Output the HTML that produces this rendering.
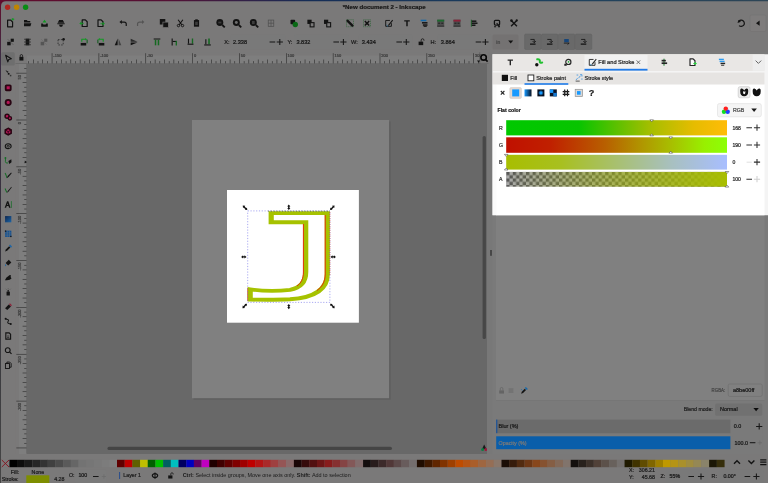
<!DOCTYPE html>
<html><head><meta charset="utf-8"><title>Inkscape</title>
<style>html,body{margin:0;padding:0;background:#777;overflow:hidden}svg{display:block;filter:blur(0.4px)}</style>
</head><body>
<svg width="768" height="483" viewBox="0 0 768 483" font-family='"Liberation Sans", sans-serif'>
<g>
<defs>
<linearGradient id="desk_d" x1="0" x2="1" y1="0" y2="0"><stop offset="0" stop-color="#620c2c"/><stop offset="0.22" stop-color="#541034"/><stop offset="0.4" stop-color="#152d56"/><stop offset="0.7" stop-color="#1d415e"/><stop offset="1" stop-color="#2d4556"/></linearGradient>
<linearGradient id="gR_d" x1="0" x2="1"><stop offset="0" stop-color="#009600"/><stop offset="0.33" stop-color="#069300"/><stop offset="0.5" stop-color="#459000"/><stop offset="0.66" stop-color="#7e8e00"/><stop offset="0.85" stop-color="#ac8d00"/><stop offset="1" stop-color="#bd8b04"/></linearGradient>
<linearGradient id="gG_d" x1="0" x2="1"><stop offset="0" stop-color="#900c00"/><stop offset="0.2" stop-color="#901800"/><stop offset="0.45" stop-color="#8a4800"/><stop offset="0.62" stop-color="#847200"/><stop offset="0.745" stop-color="#7e8e00"/><stop offset="0.9" stop-color="#72b400"/><stop offset="1" stop-color="#67bd04"/></linearGradient>
<linearGradient id="gB_d" x1="0" x2="1"><stop offset="0" stop-color="#7e8e00"/><stop offset="0.25" stop-color="#768810"/><stop offset="0.5" stop-color="#627438"/><stop offset="0.75" stop-color="#546666"/><stop offset="1" stop-color="#546495"/></linearGradient>
<linearGradient id="gA_d" x1="0" x2="1"><stop offset="0" stop-color="#7e8e00" stop-opacity="0"/><stop offset="1" stop-color="#7e8e00" stop-opacity="1"/></linearGradient>
<pattern id="chk_d" x="506.2" y="171.9" width="6.6" height="6.6" patternUnits="userSpaceOnUse"><rect width="6.6" height="6.6" fill="#545454"/><rect width="3.3" height="3.3" fill="#2c2c2c"/><rect x="3.3" y="3.3" width="3.3" height="3.3" fill="#2c2c2c"/></pattern>
</defs>
<rect x="0.00" y="0.00" width="768.00" height="483.00" fill="url(#desk_d)" />
<defs><linearGradient id="dl_d" x1="0" x2="0" y1="0" y2="1"><stop offset="0" stop-color="#620c2c"/><stop offset="0.12" stop-color="#3c2d44"/><stop offset="0.6" stop-color="#35353c"/><stop offset="1" stop-color="#454545"/></linearGradient></defs>
<rect x="0.00" y="0.00" width="2.00" height="483.00" fill="url(#dl_d)" />
<path d="M1 483 V6 Q1 1.2 6 1.2 H769 V483 Z" fill="#7a7979"/>
<circle cx="7.6" cy="7.3" r="2.7" fill="#af2820"/>
<circle cx="16.6" cy="7.3" r="2.7" fill="#bf8400"/>
<circle cx="25.6" cy="7.3" r="2.7" fill="#088c14"/>
<text x="342.70" y="9.30" font-size="6.2" fill="#1a1a1a" stroke="#1a1a1a" stroke-width="0.22" font-weight="bold" text-anchor="start"  textLength="83" lengthAdjust="spacingAndGlyphs">*New document 2 - Inkscape</text>
<rect x="26.80" y="63.70" width="460.20" height="390.70" fill="#686868" />
<rect x="193.50" y="121.50" width="197.10" height="278.20" fill="#5e5e5e" />
<rect x="192.00" y="120.00" width="197.10" height="278.20" fill="#808080" />
<g transform="scale(1.33 1)"><path d="M203.91 213.1 H246.09 V274 C246.09 287 239.10 297.5 218.05 299.3 C206.77 300 196.99 299.8 188.12 299.6 V289.4 C196.99 291 207.52 291.6 218.05 289.8 C225.56 288 229.85 283 229.85 272 V222.2 H203.91 Z" fill="none" stroke="#7c9200" stroke-width="3.9" stroke-linejoin="miter"/></g>
<path d="M303.4 224 V272 C303.4 279 301 283 297 286" fill="none" stroke="#ac1605" stroke-width="0.9"/>
<path d="M325.2 215 V274 C325.2 282 322 287 317 290.5" fill="none" stroke="#ac1605" stroke-width="0.9"/>
<path d="M329.9 212 V276" fill="none" stroke="#a42008" stroke-width="0.6" stroke-dasharray="1 1"/>
<path d="M247.6 288 V301" fill="none" stroke="#a42008" stroke-width="0.6"/>
<path d="M268 211.1 H329.9" fill="none" stroke="#283408" stroke-width="0.7" stroke-dasharray="1.2 1.6"/>
<rect x="247.7" y="210.9" width="82.2" height="91.5" fill="none" stroke="#383892" stroke-width="0.6" stroke-dasharray="1.2 1.6"/>
<g transform="translate(245 207.8) rotate(45)"><path d="M-3.2 0 L-1.2000000000000002 -1.6 V-0.7 H1.2000000000000002 V-1.6 L3.2 0 L1.2000000000000002 1.6 V0.7 H-1.2000000000000002 V1.6 Z" fill="#080808"/></g>
<g transform="translate(288.8 207.2) rotate(90)"><path d="M-2.7 0 L-0.7000000000000002 -1.6 V-0.7 H0.7000000000000002 V-1.6 L2.7 0 L0.7000000000000002 1.6 V0.7 H-0.7000000000000002 V1.6 Z" fill="#080808"/></g>
<g transform="translate(332.3 207.8) rotate(-45)"><path d="M-3.2 0 L-1.2000000000000002 -1.6 V-0.7 H1.2000000000000002 V-1.6 L3.2 0 L1.2000000000000002 1.6 V0.7 H-1.2000000000000002 V1.6 Z" fill="#080808"/></g>
<g transform="translate(243.8 256.9) rotate(0)"><path d="M-2.7 0 L-0.7000000000000002 -1.6 V-0.7 H0.7000000000000002 V-1.6 L2.7 0 L0.7000000000000002 1.6 V0.7 H-0.7000000000000002 V1.6 Z" fill="#080808"/></g>
<g transform="translate(333.2 256.9) rotate(0)"><path d="M-2.7 0 L-0.7000000000000002 -1.6 V-0.7 H0.7000000000000002 V-1.6 L2.7 0 L0.7000000000000002 1.6 V0.7 H-0.7000000000000002 V1.6 Z" fill="#080808"/></g>
<g transform="translate(244.7 305.9) rotate(-45)"><path d="M-3.2 0 L-1.2000000000000002 -1.6 V-0.7 H1.2000000000000002 V-1.6 L3.2 0 L1.2000000000000002 1.6 V0.7 H-1.2000000000000002 V1.6 Z" fill="#080808"/></g>
<g transform="translate(288.8 306.6) rotate(90)"><path d="M-2.7 0 L-0.7000000000000002 -1.6 V-0.7 H0.7000000000000002 V-1.6 L2.7 0 L0.7000000000000002 1.6 V0.7 H-0.7000000000000002 V1.6 Z" fill="#080808"/></g>
<g transform="translate(332.4 305.9) rotate(45)"><path d="M-3.2 0 L-1.2000000000000002 -1.6 V-0.7 H1.2000000000000002 V-1.6 L3.2 0 L1.2000000000000002 1.6 V0.7 H-1.2000000000000002 V1.6 Z" fill="#080808"/></g>
<rect x="107.50" y="446.80" width="284.50" height="3.20" fill="#454545" rx="1.6"/>
<rect x="482.60" y="136.00" width="3.30" height="203.00" fill="#474747" rx="1.6"/>
<path d="M482 449 L484.2 444.6 L486.4 449 Z" fill="#1a1a1a"/><circle cx="482.6" cy="449.6" r="1.5" fill="#0c7e42"/><circle cx="485.8" cy="449.6" r="1.5" fill="#9c183c"/>
<rect x="487.00" y="52.00" width="6.00" height="402.40" fill="#787878" />
<rect x="490.40" y="250.00" width="1.20" height="5.80" fill="#282828" />
<rect x="15.50" y="52.30" width="473.00" height="11.40" fill="#7a7979" />
<rect x="27.00" y="55.50" width="452.60" height="8.20" fill="#7e7e7e" />
<rect x="15.50" y="63.70" width="11.30" height="390.70" fill="#7a7979" />
<rect x="19.00" y="64.00" width="7.80" height="390.40" fill="#7e7e7e" />
<rect x="28.32" y="61.10" width="0.60" height="2.60" fill="#2a2a2a" />
<rect x="33.01" y="59.50" width="0.60" height="4.20" fill="#2a2a2a" />
<rect x="37.69" y="61.10" width="0.60" height="2.60" fill="#2a2a2a" />
<rect x="42.38" y="59.50" width="0.60" height="4.20" fill="#2a2a2a" />
<rect x="47.06" y="61.10" width="0.60" height="2.60" fill="#2a2a2a" />
<rect x="51.75" y="53.20" width="0.60" height="10.50" fill="#2a2a2a" />
<text x="53.35" y="57.30" font-size="4" fill="#3c3c3c" stroke="#3c3c3c" stroke-width="0.22" font-weight="normal" text-anchor="start" >-150</text>
<rect x="56.43" y="61.10" width="0.60" height="2.60" fill="#2a2a2a" />
<rect x="61.12" y="59.50" width="0.60" height="4.20" fill="#2a2a2a" />
<rect x="65.80" y="61.10" width="0.60" height="2.60" fill="#2a2a2a" />
<rect x="70.49" y="59.50" width="0.60" height="4.20" fill="#2a2a2a" />
<rect x="75.17" y="61.10" width="0.60" height="2.60" fill="#2a2a2a" />
<rect x="79.86" y="59.50" width="0.60" height="4.20" fill="#2a2a2a" />
<rect x="84.54" y="61.10" width="0.60" height="2.60" fill="#2a2a2a" />
<rect x="89.23" y="59.50" width="0.60" height="4.20" fill="#2a2a2a" />
<rect x="93.91" y="61.10" width="0.60" height="2.60" fill="#2a2a2a" />
<rect x="98.60" y="53.20" width="0.60" height="10.50" fill="#2a2a2a" />
<text x="100.20" y="57.30" font-size="4" fill="#3c3c3c" stroke="#3c3c3c" stroke-width="0.22" font-weight="normal" text-anchor="start" >-100</text>
<rect x="103.28" y="61.10" width="0.60" height="2.60" fill="#2a2a2a" />
<rect x="107.97" y="59.50" width="0.60" height="4.20" fill="#2a2a2a" />
<rect x="112.65" y="61.10" width="0.60" height="2.60" fill="#2a2a2a" />
<rect x="117.34" y="59.50" width="0.60" height="4.20" fill="#2a2a2a" />
<rect x="122.02" y="61.10" width="0.60" height="2.60" fill="#2a2a2a" />
<rect x="126.71" y="59.50" width="0.60" height="4.20" fill="#2a2a2a" />
<rect x="131.39" y="61.10" width="0.60" height="2.60" fill="#2a2a2a" />
<rect x="136.08" y="59.50" width="0.60" height="4.20" fill="#2a2a2a" />
<rect x="140.76" y="61.10" width="0.60" height="2.60" fill="#2a2a2a" />
<rect x="145.45" y="53.20" width="0.60" height="10.50" fill="#2a2a2a" />
<text x="147.05" y="57.30" font-size="4" fill="#3c3c3c" stroke="#3c3c3c" stroke-width="0.22" font-weight="normal" text-anchor="start" >-50</text>
<rect x="150.13" y="61.10" width="0.60" height="2.60" fill="#2a2a2a" />
<rect x="154.82" y="59.50" width="0.60" height="4.20" fill="#2a2a2a" />
<rect x="159.50" y="61.10" width="0.60" height="2.60" fill="#2a2a2a" />
<rect x="164.19" y="59.50" width="0.60" height="4.20" fill="#2a2a2a" />
<rect x="168.87" y="61.10" width="0.60" height="2.60" fill="#2a2a2a" />
<rect x="173.56" y="59.50" width="0.60" height="4.20" fill="#2a2a2a" />
<rect x="178.24" y="61.10" width="0.60" height="2.60" fill="#2a2a2a" />
<rect x="182.93" y="59.50" width="0.60" height="4.20" fill="#2a2a2a" />
<rect x="187.61" y="61.10" width="0.60" height="2.60" fill="#2a2a2a" />
<rect x="192.30" y="53.20" width="0.60" height="10.50" fill="#2a2a2a" />
<text x="193.90" y="57.30" font-size="4" fill="#3c3c3c" stroke="#3c3c3c" stroke-width="0.22" font-weight="normal" text-anchor="start" >0</text>
<rect x="196.98" y="61.10" width="0.60" height="2.60" fill="#2a2a2a" />
<rect x="201.67" y="59.50" width="0.60" height="4.20" fill="#2a2a2a" />
<rect x="206.35" y="61.10" width="0.60" height="2.60" fill="#2a2a2a" />
<rect x="211.04" y="59.50" width="0.60" height="4.20" fill="#2a2a2a" />
<rect x="215.72" y="61.10" width="0.60" height="2.60" fill="#2a2a2a" />
<rect x="220.41" y="59.50" width="0.60" height="4.20" fill="#2a2a2a" />
<rect x="225.09" y="61.10" width="0.60" height="2.60" fill="#2a2a2a" />
<rect x="229.78" y="59.50" width="0.60" height="4.20" fill="#2a2a2a" />
<rect x="234.46" y="61.10" width="0.60" height="2.60" fill="#2a2a2a" />
<rect x="239.15" y="53.20" width="0.60" height="10.50" fill="#2a2a2a" />
<text x="240.75" y="57.30" font-size="4" fill="#3c3c3c" stroke="#3c3c3c" stroke-width="0.22" font-weight="normal" text-anchor="start" >50</text>
<rect x="243.83" y="61.10" width="0.60" height="2.60" fill="#2a2a2a" />
<rect x="248.52" y="59.50" width="0.60" height="4.20" fill="#2a2a2a" />
<rect x="253.20" y="61.10" width="0.60" height="2.60" fill="#2a2a2a" />
<rect x="257.89" y="59.50" width="0.60" height="4.20" fill="#2a2a2a" />
<rect x="262.57" y="61.10" width="0.60" height="2.60" fill="#2a2a2a" />
<rect x="267.26" y="59.50" width="0.60" height="4.20" fill="#2a2a2a" />
<rect x="271.94" y="61.10" width="0.60" height="2.60" fill="#2a2a2a" />
<rect x="276.63" y="59.50" width="0.60" height="4.20" fill="#2a2a2a" />
<rect x="281.31" y="61.10" width="0.60" height="2.60" fill="#2a2a2a" />
<rect x="286.00" y="53.20" width="0.60" height="10.50" fill="#2a2a2a" />
<text x="287.60" y="57.30" font-size="4" fill="#3c3c3c" stroke="#3c3c3c" stroke-width="0.22" font-weight="normal" text-anchor="start" >100</text>
<rect x="290.69" y="61.10" width="0.60" height="2.60" fill="#2a2a2a" />
<rect x="295.37" y="59.50" width="0.60" height="4.20" fill="#2a2a2a" />
<rect x="300.06" y="61.10" width="0.60" height="2.60" fill="#2a2a2a" />
<rect x="304.74" y="59.50" width="0.60" height="4.20" fill="#2a2a2a" />
<rect x="309.43" y="61.10" width="0.60" height="2.60" fill="#2a2a2a" />
<rect x="314.11" y="59.50" width="0.60" height="4.20" fill="#2a2a2a" />
<rect x="318.80" y="61.10" width="0.60" height="2.60" fill="#2a2a2a" />
<rect x="323.48" y="59.50" width="0.60" height="4.20" fill="#2a2a2a" />
<rect x="328.17" y="61.10" width="0.60" height="2.60" fill="#2a2a2a" />
<rect x="332.85" y="53.20" width="0.60" height="10.50" fill="#2a2a2a" />
<text x="334.45" y="57.30" font-size="4" fill="#3c3c3c" stroke="#3c3c3c" stroke-width="0.22" font-weight="normal" text-anchor="start" >150</text>
<rect x="337.54" y="61.10" width="0.60" height="2.60" fill="#2a2a2a" />
<rect x="342.22" y="59.50" width="0.60" height="4.20" fill="#2a2a2a" />
<rect x="346.91" y="61.10" width="0.60" height="2.60" fill="#2a2a2a" />
<rect x="351.59" y="59.50" width="0.60" height="4.20" fill="#2a2a2a" />
<rect x="356.28" y="61.10" width="0.60" height="2.60" fill="#2a2a2a" />
<rect x="360.96" y="59.50" width="0.60" height="4.20" fill="#2a2a2a" />
<rect x="365.65" y="61.10" width="0.60" height="2.60" fill="#2a2a2a" />
<rect x="370.33" y="59.50" width="0.60" height="4.20" fill="#2a2a2a" />
<rect x="375.02" y="61.10" width="0.60" height="2.60" fill="#2a2a2a" />
<rect x="379.70" y="53.20" width="0.60" height="10.50" fill="#2a2a2a" />
<text x="381.30" y="57.30" font-size="4" fill="#3c3c3c" stroke="#3c3c3c" stroke-width="0.22" font-weight="normal" text-anchor="start" >200</text>
<rect x="384.38" y="61.10" width="0.60" height="2.60" fill="#2a2a2a" />
<rect x="389.07" y="59.50" width="0.60" height="4.20" fill="#2a2a2a" />
<rect x="393.75" y="61.10" width="0.60" height="2.60" fill="#2a2a2a" />
<rect x="398.44" y="59.50" width="0.60" height="4.20" fill="#2a2a2a" />
<rect x="403.12" y="61.10" width="0.60" height="2.60" fill="#2a2a2a" />
<rect x="407.81" y="59.50" width="0.60" height="4.20" fill="#2a2a2a" />
<rect x="412.50" y="61.10" width="0.60" height="2.60" fill="#2a2a2a" />
<rect x="417.18" y="59.50" width="0.60" height="4.20" fill="#2a2a2a" />
<rect x="421.87" y="61.10" width="0.60" height="2.60" fill="#2a2a2a" />
<rect x="426.55" y="53.20" width="0.60" height="10.50" fill="#2a2a2a" />
<text x="428.15" y="57.30" font-size="4" fill="#3c3c3c" stroke="#3c3c3c" stroke-width="0.22" font-weight="normal" text-anchor="start" >250</text>
<rect x="431.24" y="61.10" width="0.60" height="2.60" fill="#2a2a2a" />
<rect x="435.92" y="59.50" width="0.60" height="4.20" fill="#2a2a2a" />
<rect x="440.61" y="61.10" width="0.60" height="2.60" fill="#2a2a2a" />
<rect x="445.29" y="59.50" width="0.60" height="4.20" fill="#2a2a2a" />
<rect x="449.97" y="61.10" width="0.60" height="2.60" fill="#2a2a2a" />
<rect x="454.66" y="59.50" width="0.60" height="4.20" fill="#2a2a2a" />
<rect x="459.34" y="61.10" width="0.60" height="2.60" fill="#2a2a2a" />
<rect x="464.03" y="59.50" width="0.60" height="4.20" fill="#2a2a2a" />
<rect x="468.71" y="61.10" width="0.60" height="2.60" fill="#2a2a2a" />
<rect x="473.40" y="53.20" width="0.60" height="10.50" fill="#2a2a2a" />
<text x="475.00" y="57.30" font-size="4" fill="#3c3c3c" stroke="#3c3c3c" stroke-width="0.22" font-weight="normal" text-anchor="start" >300</text>
<rect x="478.08" y="61.10" width="0.60" height="2.60" fill="#2a2a2a" />
<rect x="16.30" y="447.65" width="10.50" height="0.60" fill="#2a2a2a" />
<rect x="24.20" y="442.97" width="2.60" height="0.60" fill="#2a2a2a" />
<rect x="22.60" y="438.28" width="4.20" height="0.60" fill="#2a2a2a" />
<rect x="24.20" y="433.60" width="2.60" height="0.60" fill="#2a2a2a" />
<rect x="22.60" y="428.91" width="4.20" height="0.60" fill="#2a2a2a" />
<rect x="24.20" y="424.23" width="2.60" height="0.60" fill="#2a2a2a" />
<rect x="22.60" y="419.54" width="4.20" height="0.60" fill="#2a2a2a" />
<rect x="24.20" y="414.86" width="2.60" height="0.60" fill="#2a2a2a" />
<rect x="22.60" y="410.17" width="4.20" height="0.60" fill="#2a2a2a" />
<rect x="24.20" y="405.49" width="2.60" height="0.60" fill="#2a2a2a" />
<rect x="16.30" y="400.80" width="10.50" height="0.60" fill="#2a2a2a" />
<text x="0.00" y="0.00" font-size="4" fill="#3c3c3c" stroke="#3c3c3c" stroke-width="0.22" font-weight="normal" text-anchor="end" transform="translate(20.6 403.1) rotate(-90)">-300</text>
<rect x="24.20" y="396.12" width="2.60" height="0.60" fill="#2a2a2a" />
<rect x="22.60" y="391.43" width="4.20" height="0.60" fill="#2a2a2a" />
<rect x="24.20" y="386.75" width="2.60" height="0.60" fill="#2a2a2a" />
<rect x="22.60" y="382.06" width="4.20" height="0.60" fill="#2a2a2a" />
<rect x="24.20" y="377.38" width="2.60" height="0.60" fill="#2a2a2a" />
<rect x="22.60" y="372.69" width="4.20" height="0.60" fill="#2a2a2a" />
<rect x="24.20" y="368.00" width="2.60" height="0.60" fill="#2a2a2a" />
<rect x="22.60" y="363.32" width="4.20" height="0.60" fill="#2a2a2a" />
<rect x="24.20" y="358.63" width="2.60" height="0.60" fill="#2a2a2a" />
<rect x="16.30" y="353.95" width="10.50" height="0.60" fill="#2a2a2a" />
<text x="0.00" y="0.00" font-size="4" fill="#3c3c3c" stroke="#3c3c3c" stroke-width="0.22" font-weight="normal" text-anchor="end" transform="translate(20.6 356.2) rotate(-90)">-250</text>
<rect x="24.20" y="349.26" width="2.60" height="0.60" fill="#2a2a2a" />
<rect x="22.60" y="344.58" width="4.20" height="0.60" fill="#2a2a2a" />
<rect x="24.20" y="339.89" width="2.60" height="0.60" fill="#2a2a2a" />
<rect x="22.60" y="335.21" width="4.20" height="0.60" fill="#2a2a2a" />
<rect x="24.20" y="330.53" width="2.60" height="0.60" fill="#2a2a2a" />
<rect x="22.60" y="325.84" width="4.20" height="0.60" fill="#2a2a2a" />
<rect x="24.20" y="321.16" width="2.60" height="0.60" fill="#2a2a2a" />
<rect x="22.60" y="316.47" width="4.20" height="0.60" fill="#2a2a2a" />
<rect x="24.20" y="311.79" width="2.60" height="0.60" fill="#2a2a2a" />
<rect x="16.30" y="307.10" width="10.50" height="0.60" fill="#2a2a2a" />
<text x="0.00" y="0.00" font-size="4" fill="#3c3c3c" stroke="#3c3c3c" stroke-width="0.22" font-weight="normal" text-anchor="end" transform="translate(20.6 309.4) rotate(-90)">-200</text>
<rect x="24.20" y="302.42" width="2.60" height="0.60" fill="#2a2a2a" />
<rect x="22.60" y="297.73" width="4.20" height="0.60" fill="#2a2a2a" />
<rect x="24.20" y="293.05" width="2.60" height="0.60" fill="#2a2a2a" />
<rect x="22.60" y="288.36" width="4.20" height="0.60" fill="#2a2a2a" />
<rect x="24.20" y="283.68" width="2.60" height="0.60" fill="#2a2a2a" />
<rect x="22.60" y="278.99" width="4.20" height="0.60" fill="#2a2a2a" />
<rect x="24.20" y="274.31" width="2.60" height="0.60" fill="#2a2a2a" />
<rect x="22.60" y="269.62" width="4.20" height="0.60" fill="#2a2a2a" />
<rect x="24.20" y="264.94" width="2.60" height="0.60" fill="#2a2a2a" />
<rect x="16.30" y="260.25" width="10.50" height="0.60" fill="#2a2a2a" />
<text x="0.00" y="0.00" font-size="4" fill="#3c3c3c" stroke="#3c3c3c" stroke-width="0.22" font-weight="normal" text-anchor="end" transform="translate(20.6 262.6) rotate(-90)">-150</text>
<rect x="24.20" y="255.56" width="2.60" height="0.60" fill="#2a2a2a" />
<rect x="22.60" y="250.88" width="4.20" height="0.60" fill="#2a2a2a" />
<rect x="24.20" y="246.19" width="2.60" height="0.60" fill="#2a2a2a" />
<rect x="22.60" y="241.51" width="4.20" height="0.60" fill="#2a2a2a" />
<rect x="24.20" y="236.82" width="2.60" height="0.60" fill="#2a2a2a" />
<rect x="22.60" y="232.14" width="4.20" height="0.60" fill="#2a2a2a" />
<rect x="24.20" y="227.45" width="2.60" height="0.60" fill="#2a2a2a" />
<rect x="22.60" y="222.77" width="4.20" height="0.60" fill="#2a2a2a" />
<rect x="24.20" y="218.08" width="2.60" height="0.60" fill="#2a2a2a" />
<rect x="16.30" y="213.40" width="10.50" height="0.60" fill="#2a2a2a" />
<text x="0.00" y="0.00" font-size="4" fill="#3c3c3c" stroke="#3c3c3c" stroke-width="0.22" font-weight="normal" text-anchor="end" transform="translate(20.6 215.7) rotate(-90)">-100</text>
<rect x="24.20" y="208.72" width="2.60" height="0.60" fill="#2a2a2a" />
<rect x="22.60" y="204.03" width="4.20" height="0.60" fill="#2a2a2a" />
<rect x="24.20" y="199.34" width="2.60" height="0.60" fill="#2a2a2a" />
<rect x="22.60" y="194.66" width="4.20" height="0.60" fill="#2a2a2a" />
<rect x="24.20" y="189.97" width="2.60" height="0.60" fill="#2a2a2a" />
<rect x="22.60" y="185.29" width="4.20" height="0.60" fill="#2a2a2a" />
<rect x="24.20" y="180.60" width="2.60" height="0.60" fill="#2a2a2a" />
<rect x="22.60" y="175.92" width="4.20" height="0.60" fill="#2a2a2a" />
<rect x="24.20" y="171.23" width="2.60" height="0.60" fill="#2a2a2a" />
<rect x="16.30" y="166.55" width="10.50" height="0.60" fill="#2a2a2a" />
<text x="0.00" y="0.00" font-size="4" fill="#3c3c3c" stroke="#3c3c3c" stroke-width="0.22" font-weight="normal" text-anchor="end" transform="translate(20.6 168.8) rotate(-90)">-50</text>
<rect x="24.20" y="161.86" width="2.60" height="0.60" fill="#2a2a2a" />
<rect x="22.60" y="157.18" width="4.20" height="0.60" fill="#2a2a2a" />
<rect x="24.20" y="152.49" width="2.60" height="0.60" fill="#2a2a2a" />
<rect x="22.60" y="147.81" width="4.20" height="0.60" fill="#2a2a2a" />
<rect x="24.20" y="143.12" width="2.60" height="0.60" fill="#2a2a2a" />
<rect x="22.60" y="138.44" width="4.20" height="0.60" fill="#2a2a2a" />
<rect x="24.20" y="133.75" width="2.60" height="0.60" fill="#2a2a2a" />
<rect x="22.60" y="129.07" width="4.20" height="0.60" fill="#2a2a2a" />
<rect x="24.20" y="124.39" width="2.60" height="0.60" fill="#2a2a2a" />
<rect x="16.30" y="119.70" width="10.50" height="0.60" fill="#2a2a2a" />
<text x="0.00" y="0.00" font-size="4" fill="#3c3c3c" stroke="#3c3c3c" stroke-width="0.22" font-weight="normal" text-anchor="end" transform="translate(20.6 122.0) rotate(-90)">0</text>
<rect x="24.20" y="115.02" width="2.60" height="0.60" fill="#2a2a2a" />
<rect x="22.60" y="110.33" width="4.20" height="0.60" fill="#2a2a2a" />
<rect x="24.20" y="105.64" width="2.60" height="0.60" fill="#2a2a2a" />
<rect x="22.60" y="100.96" width="4.20" height="0.60" fill="#2a2a2a" />
<rect x="24.20" y="96.27" width="2.60" height="0.60" fill="#2a2a2a" />
<rect x="22.60" y="91.59" width="4.20" height="0.60" fill="#2a2a2a" />
<rect x="24.20" y="86.90" width="2.60" height="0.60" fill="#2a2a2a" />
<rect x="22.60" y="82.22" width="4.20" height="0.60" fill="#2a2a2a" />
<rect x="24.20" y="77.53" width="2.60" height="0.60" fill="#2a2a2a" />
<rect x="16.30" y="72.85" width="10.50" height="0.60" fill="#2a2a2a" />
<text x="0.00" y="0.00" font-size="4" fill="#3c3c3c" stroke="#3c3c3c" stroke-width="0.22" font-weight="normal" text-anchor="end" transform="translate(20.6 75.1) rotate(-90)">50</text>
<rect x="24.20" y="68.16" width="2.60" height="0.60" fill="#2a2a2a" />
<rect x="15.50" y="63.40" width="473.00" height="0.50" fill="#5e5e5e" />
<rect x="26.50" y="63.70" width="0.50" height="390.00" fill="#5e5e5e" />
<rect x="479.60" y="52.30" width="0.50" height="11.40" fill="#4c4c4c" />
<circle cx="483.6" cy="57.4" r="2.7" fill="none" stroke="#080808" stroke-width="1.6"/><path d="M485.6 59.5 L487.6 61.6" stroke="#080808" stroke-width="1.7"/>
<g transform="translate(10.00 23.50) scale(0.92)" opacity="1"><path d="M-2.6 -3.6 H0.8 L2.8 -1.6 V3.6 H-2.6 Z" fill="#7e7e7e" stroke="#131313" stroke-width="1.3" stroke-linejoin="round"/><path d="M1.6 -4.6 H4.6 M3.1 -6 V-3.2" stroke="#119a23" stroke-width="1.1"/></g>
<g transform="translate(27.50 23.20) scale(0.92)" opacity="1"><path d="M-3.8 -3.4 H-0.8 L0.2 -2.3 H3 V-0.8 H-3.8 Z M-3.8 0 H4.2 L3.2 3.4 H-3.8 Z" fill="#131313"/></g>
<g transform="translate(44.50 23.50) scale(0.92)" opacity="1"><path d="M-3.6 0 H-2 L-1.2 1.2 H1.2 L2 0 H3.6 V3.6 H-3.6 Z" fill="#131313"/><path d="M0 -4.2 L2.2 -1 H-2.2 Z" fill="#119a23"/></g>
<g transform="translate(61.00 23.20) scale(0.92)" opacity="1"><path d="M-2 -3.6 H2 L3.6 -0.6 H-3.6 Z M-4 0 H4 V1.2 H-4 Z M-2.2 1.8 H2.2 L1.2 3.8 H-1.2 Z" fill="#131313"/></g>
<g transform="translate(84.60 23.20) scale(0.92)" opacity="1"><path d="M-2.6 -3.6 H0.8 L2.8 -1.6 V3.6 H-2.6 Z" fill="#7e7e7e" stroke="#131313" stroke-width="1.3" stroke-linejoin="round"/><path d="M-1 0.2 H-5 M-3.2 -1.6 L-5 0.2 L-3.2 2" stroke="#119a23" stroke-width="1" fill="none"/></g>
<g transform="translate(100.40 23.20) scale(0.92)" opacity="1"><path d="M-2.6 -3.6 H0.8 L2.8 -1.6 V3.6 H-2.6 Z" fill="#7e7e7e" stroke="#131313" stroke-width="1.3" stroke-linejoin="round"/><path d="M0 0.6 H4 M2.4 -1.2 L4.2 0.6 L2.4 2.4" stroke="#119a23" stroke-width="1" fill="none"/></g>
<g transform="translate(123.30 23.20) scale(0.92)" opacity="1"><g transform="scale(1 1)"><path d="M-2.6 -1.2 H1 Q3.2 -1.2 3.2 1 V3" fill="none" stroke="#131313" stroke-width="1.3"/><path d="M-4.2 -1.2 L-1.6 -3.4 V1 Z" fill="#131313"/></g></g>
<g transform="translate(140.50 23.20) scale(0.92)" opacity="0.8"><g transform="scale(-1 1)"><path d="M-2.6 -1.2 H1 Q3.2 -1.2 3.2 1 V3" fill="none" stroke="#4c4c4c" stroke-width="1.3"/><path d="M-4.2 -1.2 L-1.6 -3.4 V1 Z" fill="#4c4c4c"/></g></g>
<g transform="translate(164.00 23.20) scale(1.1)" opacity="1"><rect x="-3.8" y="-3.8" width="5" height="5" fill="#131313"/><rect x="-1" y="-1" width="5" height="5" fill="#131313" stroke="#7a7979" stroke-width="0.6"/></g>
<g transform="translate(180.50 23.20) scale(0.92)" opacity="1"><path d="M-2.6 -3.8 L1.6 2 M2.6 -3.8 L-1.6 2" stroke="#131313" stroke-width="1.2"/><circle cx="-2.2" cy="2.6" r="1.3" fill="none" stroke="#131313" stroke-width="1"/><circle cx="2.2" cy="2.6" r="1.3" fill="none" stroke="#131313" stroke-width="1"/></g>
<g transform="translate(196.50 23.20) scale(0.92)" opacity="1"><rect x="-2.8" y="-3.4" width="5.6" height="7.2" fill="#131313"/><rect x="-1.4" y="-4.2" width="2.8" height="1.6" fill="#131313"/><rect x="-1.4" y="-1.6" width="2.8" height="3.6" fill="#3c3c3c"/></g>
<g transform="translate(220.50 23.20) scale(1.12)" opacity="1"><circle cx="-0.6" cy="-0.6" r="3.1" fill="#131313"/><path d="M1.6 1.6 L3.8 3.8" stroke="#131313" stroke-width="1.6"/><rect x="-2" y="-1.4" width="2.8" height="1.6" fill="#3c3c3c"/></g>
<g transform="translate(237.00 23.20) scale(1.12)" opacity="1"><circle cx="-0.6" cy="-0.6" r="3.1" fill="#131313"/><path d="M1.6 1.6 L3.8 3.8" stroke="#131313" stroke-width="1.6"/><circle cx="-0.6" cy="-0.6" r="1.3" fill="#6e6e6e"/></g>
<g transform="translate(254.00 23.20) scale(1.12)" opacity="1"><circle cx="-0.6" cy="-0.6" r="3.1" fill="#131313"/><path d="M1.6 1.6 L3.8 3.8" stroke="#131313" stroke-width="1.6"/><rect x="-1.8" y="-2" width="2.4" height="2.8" fill="#3c3c3c"/></g>
<g transform="translate(271.00 23.20) scale(0.92)" opacity="0.8"><rect x="-3" y="-3.4" width="6" height="6.8" fill="none" stroke="#444444" stroke-width="0.8"/><path d="M0 -3.4 V3.4 M-3 0 H3" stroke="#444444" stroke-width="0.8"/></g>
<g transform="translate(294.00 23.20) scale(0.92)" opacity="1"><rect x="-3.8" y="-3.8" width="5" height="5" rx="0.8" fill="#131313"/><circle cx="1.4" cy="1.4" r="2.9" fill="#086814"/></g>
<g transform="translate(310.70 23.20) scale(0.92)" opacity="1"><rect x="-3.6" y="-3.8" width="4.6" height="4.6" fill="#131313"/><rect x="-0.6" y="-0.6" width="4.2" height="4.6" fill="#7a7979" stroke="#131313" stroke-width="1.2"/></g>
<g transform="translate(327.30 23.20) scale(0.92)" opacity="1"><rect x="-3.6" y="-3.8" width="4.6" height="4.6" fill="#131313"/><rect x="-0.6" y="-0.6" width="4.2" height="4.6" fill="#7a7979" stroke="#131313" stroke-width="1.2"/></g>
<g transform="translate(350.00 23.20) scale(0.92)" opacity="1"><rect x="-3.8" y="-3.8" width="7.6" height="7.6" fill="none" stroke="#155d21" stroke-width="0.7" stroke-dasharray="1 1.2"/><path d="M-2.6 -2.6 L2.6 2.6" stroke="#131313" stroke-width="2.6" stroke-linecap="round"/></g>
<g transform="translate(367.00 23.20) scale(0.92)" opacity="1"><rect x="-3.8" y="-3.8" width="7.6" height="7.6" fill="none" stroke="#155d21" stroke-width="0.7" stroke-dasharray="1 1.2"/><path d="M-2.4 -2.4 L2.4 2.4 M2.4 -2.4 L-2.4 2.4" stroke="#131313" stroke-width="1.5"/><rect x="-1.3" y="-1.3" width="2.6" height="2.6" fill="#131313"/></g>
<g transform="translate(389.00 23.20) scale(0.92)" opacity="1"><path d="M-3.6 -3 H1 M-3.6 -3 V3.4 H2.6 V0" fill="none" stroke="#131313" stroke-width="1"/><path d="M3.6 -3.8 L-0.6 1.4 L-1.4 3 L0.4 2.2 L4.4 -3 Z" fill="#131313"/><path d="M-2.6 2 L-1 3.6" stroke="#1d6a9a" stroke-width="0.9"/></g>
<g transform="translate(407.00 23.20) scale(0.92)" opacity="1"><path d="M-2.992 -3.168 H2.992 V-1.76 H0.792 V3.344 H-0.792 V-1.76 H-2.992 Z" fill="#131313"/></g>
<g transform="translate(424.00 23.20) scale(0.92)" opacity="1"><rect x="-3.6" y="-3.8" width="6.2" height="1.7" fill="#1569aa"/><rect x="-2.2" y="-1.2" width="6" height="1.6" fill="#131313"/><rect x="-1.2" y="1.2" width="5" height="1.6" fill="#131313"/><rect x="-0.4" y="3.2" width="3.4" height="0.9" fill="#131313"/></g>
<g transform="translate(440.70 23.20) scale(0.92)" opacity="1"><rect x="-3.8" y="-3.8" width="7.6" height="7.6" fill="#4d4d4d"/><rect x="-3.8" y="-3.8" width="7.6" height="2" fill="#1d6a2e"/><rect x="-2.8" y="-0.6" width="2.2" height="1.4" fill="#2a2a2a"/><rect x="0.6" y="-0.6" width="2.2" height="1.4" fill="#2a2a2a"/><rect x="-3.8" y="2.6" width="7.6" height="1.2" fill="#333333"/></g>
<g transform="translate(457.00 23.20) scale(0.92)" opacity="1"><rect x="-3.8" y="-3.8" width="7.6" height="7.6" fill="#4d4d4d"/><rect x="-3.8" y="-3.8" width="7.6" height="2" fill="#8c2038"/><rect x="-2.8" y="-0.6" width="2.2" height="1.4" fill="#2a2a2a"/><rect x="0.6" y="-0.6" width="2.2" height="1.4" fill="#2a2a2a"/><rect x="-3.8" y="2.6" width="7.6" height="1.2" fill="#333333"/></g>
<g transform="translate(474.00 23.20) scale(0.92)" opacity="1"><rect x="-3.4" y="-3.8" width="1" height="7.6" fill="#155d21"/><rect x="-2.4" y="-3" width="5" height="1.6" fill="#131313"/><rect x="-2.4" y="-0.8" width="6.2" height="1.6" fill="#131313"/><rect x="-2.4" y="1.4" width="4" height="1.6" fill="#131313"/></g>
<g transform="translate(497.00 23.20) scale(0.92)" opacity="1"><rect x="-2.8" y="-3" width="5.6" height="5" rx="1" fill="none" stroke="#131313" stroke-width="1.4"/><path d="M-3.2 3.8 H-1 M1 3.8 H3.2 M-0.4 0 L2.8 3.4" stroke="#131313" stroke-width="1.2"/></g>
<g transform="translate(514.00 23.20) scale(0.92)" opacity="1"><path d="M-3.2 3.2 L3 -3 M-3 -3 L3.2 3.2" stroke="#131313" stroke-width="1.5"/><circle cx="-2.8" cy="-2.8" r="1.4" fill="#131313"/><circle cx="3" cy="-3" r="1.2" fill="#131313"/></g>
<g transform="translate(741.30 23.20) scale(0.92)" opacity="1"><path d="M-2.6 -2.2 A3.4 3.4 0 1 1 -2.4 2.6" fill="none" stroke="#131313" stroke-width="1.3"/><path d="M-4.6 -0.8 H-0.6 L-2.6 -3.6 Z" fill="#131313" transform="rotate(-20 -2.6 -2)"/></g>
<rect x="750.00" y="15.00" width="16.00" height="16.50" fill="#7e7c7c" rx="1.5" stroke="#727171" stroke-width="0.5"/>
<path d="M759.6 20.6 L756 23.2 L759.6 25.8 Z" fill="#131313"/>
<g transform="translate(10.50 42.00) scale(0.92)" opacity="1"><rect x="-3.6" y="-0.2" width="3.8" height="3.8" fill="#131313"/><rect x="0.2" y="-3.6" width="3.4" height="3.4" fill="#131313"/><path d="M-3 -3 L3 3" stroke="#4c4c4c" stroke-width="0.7"/></g>
<g transform="translate(27.50 42.00) scale(0.92)" opacity="1"><rect x="-2" y="-3.6" width="4" height="7.2" fill="#131313"/><path d="M-3.8 -3 H3.8 M-3.8 0 H3.8 M-3.8 3 H3.8" stroke="#2a2a2a" stroke-width="0.8"/></g>
<g transform="translate(44.00 42.00) scale(0.92)" opacity="0.35"><rect x="-3.6" y="-0.2" width="3.8" height="3.8" fill="#131313"/><rect x="0.2" y="-3.6" width="3.4" height="3.4" fill="#131313"/><path d="M-3 -3 L3 3" stroke="#4c4c4c" stroke-width="0.7"/></g>
<g transform="translate(61.00 42.00) scale(0.92)" opacity="1"><rect x="-3.2" y="-2.6" width="5.6" height="5.8" fill="none" stroke="#2a2a2a" stroke-width="0.9" stroke-dasharray="1.6 1.4"/><circle cx="2.8" cy="-3" r="1.4" fill="#131313"/></g>
<g transform="translate(84.00 42.00) scale(0.92)" opacity="1"><g transform="scale(1 1)"><rect x="-3.6" y="1" width="6" height="2.8" fill="#131313"/><path d="M-2.4 -0.4 V-3 H1.6" fill="none" stroke="#119a23" stroke-width="1.2"/><path d="M1.2 -4.4 L3.4 -3 L1.2 -1.6 Z" fill="#119a23"/><rect x="2.8" y="-2.6" width="1.2" height="4" fill="#155d21"/></g></g>
<g transform="translate(101.00 42.00) scale(0.92)" opacity="1"><g transform="scale(-1 1)"><rect x="-3.6" y="1" width="6" height="2.8" fill="#131313"/><path d="M-2.4 -0.4 V-3 H1.6" fill="none" stroke="#119a23" stroke-width="1.2"/><path d="M1.2 -4.4 L3.4 -3 L1.2 -1.6 Z" fill="#119a23"/><rect x="2.8" y="-2.6" width="1.2" height="4" fill="#155d21"/></g></g>
<g transform="translate(118.00 42.00) scale(0.92)" opacity="1"><path d="M-0.4 -3.8 L-3.6 3.6 H-0.4 Z" fill="#131313"/><path d="M0.6 -3.8 L3.6 3.6 H0.6 Z" fill="#444444"/></g>
<g transform="translate(134.00 42.00) scale(0.92)" opacity="1"><path d="M-3.6 -3.6 L3.8 -0.3 H-3.6 Z" fill="#2a2a2a"/><path d="M-3.6 3.6 L3.8 0.5 H-3.6 Z" fill="#131313"/></g>
<g transform="translate(157.00 42.00) scale(0.92)" opacity="1"><rect x="-3.6" y="-3.8" width="7.2" height="1.1" fill="#131313"/><rect x="-2.4" y="-2.4" width="1.6" height="6" fill="#156921"/><rect x="0.8" y="-2.4" width="1.6" height="6" fill="#156921"/></g>
<g transform="translate(174.00 42.00) scale(0.92)" opacity="1"><rect x="-2.6" y="-3.8" width="1.2" height="7.6" fill="#131313"/><rect x="-1.4" y="-1.2" width="4" height="1.2" fill="#131313"/><rect x="1.8" y="-1.2" width="1.4" height="5" fill="#156921"/></g>
<g transform="translate(190.50 42.00) scale(0.92)" opacity="1"><rect x="-2.8" y="-3.6" width="1.2" height="5.4" fill="#131313"/><rect x="1.4" y="-3.8" width="1.5" height="5.6" fill="#156921"/><rect x="-3.2" y="1.8" width="6.4" height="1.2" fill="#131313"/></g>
<g transform="translate(207.50 42.00) scale(0.92)" opacity="1"><rect x="-2.4" y="-3" width="1.2" height="5.4" fill="#131313"/><rect x="0.8" y="-3.8" width="1.7" height="6.2" fill="#156921"/><rect x="-3.6" y="2.6" width="7.2" height="1.2" fill="#131313"/></g>
<text x="224.20" y="43.90" font-size="5.6" fill="#1d1d1d" stroke="#1d1d1d" stroke-width="0.22" font-weight="normal" text-anchor="start" >X:</text>
<rect x="230.50" y="34.50" width="55.00" height="15.00" fill="#797979" rx="1.5"/>
<text x="233.00" y="44.02" font-size="5.6" fill="#151515" stroke="#151515" stroke-width="0.22" font-weight="normal" text-anchor="start" >2.338</text>
<path d="M269.59999999999997 42.0 H275.2" stroke="#171717" stroke-width="1.05"/>
<path d="M276.7 42.0 H282.90000000000003 M279.8 38.9 V45.1" stroke="#171717" stroke-width="1.05"/>
<text x="287.40" y="43.90" font-size="5.6" fill="#1d1d1d" stroke="#1d1d1d" stroke-width="0.22" font-weight="normal" text-anchor="start" >Y:</text>
<rect x="294.00" y="34.50" width="55.00" height="15.00" fill="#797979" rx="1.5"/>
<text x="296.40" y="44.02" font-size="5.6" fill="#151515" stroke="#151515" stroke-width="0.22" font-weight="normal" text-anchor="start" >3.832</text>
<path d="M333.4 42.0 H339.0" stroke="#171717" stroke-width="1.05"/>
<path d="M340.29999999999995 42.0 H346.5 M343.4 38.9 V45.1" stroke="#171717" stroke-width="1.05"/>
<text x="351.00" y="43.90" font-size="5.6" fill="#1d1d1d" stroke="#1d1d1d" stroke-width="0.22" font-weight="normal" text-anchor="start" >W:</text>
<rect x="358.50" y="34.50" width="54.00" height="15.00" fill="#797979" rx="1.5"/>
<text x="361.80" y="44.02" font-size="5.6" fill="#151515" stroke="#151515" stroke-width="0.22" font-weight="normal" text-anchor="start" >3.434</text>
<path d="M396.4 42.0 H402.0" stroke="#171717" stroke-width="1.05"/>
<path d="M403.2 42.0 H409.40000000000003 M406.3 38.9 V45.1" stroke="#171717" stroke-width="1.05"/>
<g transform="translate(421.00 42.00) scale(0.92)" opacity="1"><rect x="-2.6" y="-0.4" width="5" height="3.8" fill="#131313"/><path d="M0.2 -0.4 V-2 A1.5 1.5 0 0 1 3.2 -2 V-1.4" fill="none" stroke="#131313" stroke-width="0.9"/></g>
<text x="430.40" y="43.90" font-size="5.6" fill="#1d1d1d" stroke="#1d1d1d" stroke-width="0.22" font-weight="normal" text-anchor="start" >H:</text>
<rect x="437.50" y="34.50" width="54.00" height="15.00" fill="#797979" rx="1.5"/>
<text x="440.80" y="44.02" font-size="5.6" fill="#151515" stroke="#151515" stroke-width="0.22" font-weight="normal" text-anchor="start" >3.864</text>
<path d="M475.7 42.0 H481.3" stroke="#171717" stroke-width="1.05"/>
<path d="M482.29999999999995 42.0 H488.5 M485.4 38.9 V45.1" stroke="#171717" stroke-width="1.05"/>
<rect x="492.50" y="34.50" width="26.00" height="15.00" fill="#747272" rx="1.5"/>
<text x="496.30" y="43.60" font-size="5" fill="#454545" stroke="#454545" stroke-width="0.22" font-weight="normal" text-anchor="start" >in</text>
<path d="M508.2 40.6 H513.2 L510.7 43.6 Z" fill="#131313"/>
<rect x="524.60" y="34.00" width="16.50" height="15.50" fill="#696969" rx="1.2" stroke="#626262" stroke-width="0.5"/>
<g transform="translate(532.80 42.00) scale(0.92)" opacity="1"><path d="M-2.6 -2.8 H1.6 V0.6 M-0.2 -1 L1.6 0.8 L3.4 -1" fill="none" stroke="#131313" stroke-width="0.9"/><rect x="-3" y="1.6" width="6" height="1.4" fill="#131313"/></g>
<rect x="541.50" y="34.00" width="16.50" height="15.50" fill="#696969" rx="1.2" stroke="#626262" stroke-width="0.5"/>
<g transform="translate(549.70 42.00) scale(0.92)" opacity="1"><path d="M-2.6 -2.8 H1.6 V0.6 M-0.2 -1 L1.6 0.8 L3.4 -1" fill="none" stroke="#131313" stroke-width="0.9"/><rect x="-3" y="1.6" width="6" height="1.4" fill="#131313"/></g>
<rect x="558.40" y="34.00" width="16.50" height="15.50" fill="#696969" rx="1.2" stroke="#626262" stroke-width="0.5"/>
<g transform="translate(566.60 42.00) scale(0.92)" opacity="1"><rect x="-2.6" y="-3.2" width="5" height="3.4" fill="#15457a"/><path d="M-3 1.2 H3 M1 2.8 L2.6 1.4" stroke="#131313" stroke-width="0.9"/></g>
<rect x="575.30" y="34.00" width="16.50" height="15.50" fill="#696969" rx="1.2" stroke="#626262" stroke-width="0.5"/>
<g transform="translate(583.50 42.00) scale(0.92)" opacity="1"><path d="M-2.6 -2.8 H1.6 V0.6 M-0.2 -1 L1.6 0.8 L3.4 -1" fill="none" stroke="#131313" stroke-width="0.9"/><rect x="-3" y="1.6" width="6" height="1.4" fill="#131313"/></g>
<rect x="1.20" y="52.20" width="13.60" height="13.20" fill="#6e6e6e" rx="1.5"/>
<g transform="translate(8.20 58.60) scale(0.92)" opacity="1"><path d="M-2.8 -3.6 L3.4 0.2 L0.6 0.9 L-0.4 3.6 Z" fill="#7a7979" stroke="#131313" stroke-width="1.2" stroke-linejoin="round"/></g>
<g transform="translate(21.40 57.60) scale(0.92)" opacity="1"><rect x="-2.2" y="-0.8" width="4.4" height="4" fill="#131313"/><path d="M-1.3 -0.8 V-2 A1.3 1.3 0 0 1 1.3 -2 V-0.8" fill="none" stroke="#131313" stroke-width="0.9"/></g>
<g transform="translate(8.20 73.20) scale(0.92)" opacity="1"><path d="M-3 -3.4 L0.6 -1.4 L-1 -0.6 Z" fill="#131313"/><rect x="-0.4" y="-0.2" width="1.8" height="1.8" fill="#131313"/><rect x="1.8" y="1.8" width="1.6" height="1.6" fill="#333333"/></g>
<g transform="translate(8.20 87.80) scale(0.92)" opacity="1"><rect x="-2.7" y="-2.7" width="5.4" height="5.4" rx="0.8" fill="#b51556" stroke="#290512" stroke-width="2"/></g>
<g transform="translate(8.20 102.40) scale(0.92)" opacity="1"><circle r="2.8" fill="#b51556" stroke="#290512" stroke-width="2"/></g>
<g transform="translate(8.20 117.00) scale(0.92)" opacity="1"><circle cx="-1.2" cy="-0.8" r="2.2" fill="#b51556" stroke="#290512" stroke-width="1.6"/><circle cx="1.8" cy="1.4" r="1.8" fill="#b51556" stroke="#290512" stroke-width="1.5"/></g>
<g transform="translate(8.20 131.60) scale(0.92)" opacity="1"><path d="M0 -3.6 L3.2 -1.8 V1.8 L0 3.6 L-3.2 1.8 V-1.8 Z" fill="#b51556" stroke="#290512" stroke-width="1.7"/><path d="M-3.2 -1.8 L0 0 L3.2 -1.8 M0 0 V3.6" stroke="#290512" stroke-width="1" fill="none"/></g>
<g transform="translate(8.20 146.20) scale(0.92)" opacity="1"><ellipse rx="3.2" ry="2.6" fill="none" stroke="#131313" stroke-width="1.2"/><ellipse rx="1.3" ry="1" fill="none" stroke="#131313" stroke-width="0.9"/></g>
<g transform="translate(8.20 160.80) scale(0.92)" opacity="1"><path d="M-3 -3.4 V1 Q-3 3 0 2.4" fill="none" stroke="#156e26" stroke-width="1"/><circle cx="-3" cy="-3" r="1" fill="#156e26"/><path d="M0.2 0.2 L3.4 -1.6 L3.6 1.6 L1.2 3.4 Z" fill="#131313"/></g>
<g transform="translate(8.20 175.40) scale(0.92)" opacity="1"><path d="M-3.4 -2.6 Q-2 0 -1.4 2.8" fill="none" stroke="#156e26" stroke-width="1.1"/><path d="M-1.6 3.2 L-0.6 0.6 L3.2 -3.2 L3.8 -2.4 L0.4 1.8 Z" fill="#131313"/></g>
<g transform="translate(8.20 190.00) scale(0.92)" opacity="1"><path d="M-3.4 -1.6 Q-2.4 0.6 -1.6 2.6" fill="none" stroke="#156e26" stroke-width="1.1"/><path d="M-1.8 3.2 L-0.4 1 L3.4 -3.4 L3.8 -2.8 L0.2 2 Z" fill="#131313"/></g>
<g transform="translate(7.60 204.60) scale(0.92)" opacity="1"><path d="M-3.2 3.4 L-0.6 -3.6 H0.8 L3.2 3.4 H1.6 L1 1.6 H-1 L-1.6 3.4 Z M-0.5 0.4 H0.6 L0 -1.6 Z" fill="#131313"/><rect x="3.6" y="-3.8" width="0.8" height="7.4" fill="#156e26"/></g>
<defs><linearGradient id="tg_d" x1="0" y1="0" x2="1" y2="1"><stop offset="0" stop-color="#0d254e"/><stop offset="1" stop-color="#1d65a6"/></linearGradient></defs>
<g transform="translate(8.20 219.20) scale(0.92)" opacity="1"><rect x="-3.4" y="-3.4" width="6.8" height="6.8" fill="url(#tg_d)"/></g>
<g transform="translate(8.20 233.80) scale(0.92)" opacity="1"><rect x="-3.4" y="-3.4" width="6.8" height="6.8" fill="#155192"/><path d="M-1 -3.4 V3.4 M1.4 -3.4 V3.4 M-3.4 -1 H3.4 M-3.4 1.4 H3.4" stroke="#5e7385" stroke-width="0.6"/><rect x="-3.6" y="-3.6" width="1.4" height="1.4" fill="#131313"/><rect x="2.2" y="2.2" width="1.4" height="1.4" fill="#131313"/></g>
<g transform="translate(8.20 248.40) scale(0.92)" opacity="1"><path d="M-3.4 3.4 L-2.6 1.2 L1 -2.4 L2.4 -1 L-1.2 2.6 Z" fill="#131313"/><path d="M1.4 -3.6 L3.6 -1.4" stroke="#1d65a6" stroke-width="1.6"/></g>
<g transform="translate(8.20 263.00) scale(0.92)" opacity="1"><path d="M-2.8 0 L0.6 -3.4 L3.4 -0.6 L0 2.8 Z" fill="#131313"/><path d="M-3.4 1.6 Q-3.8 3.4 -2.6 3.4 Q-1.8 3.2 -2.6 1.4 Z" fill="#1d65a6"/></g>
<g transform="translate(8.20 277.60) scale(0.92)" opacity="1"><path d="M-3.6 2.8 Q-2 -1 0 -1.4 Q2 -3.6 3 -2.4 Q2 -1 3.6 1 Q2 3.4 -3.6 2.8 Z" fill="#131313"/></g>
<g transform="translate(8.20 292.20) scale(0.92)" opacity="1"><rect x="-1.8" y="-0.6" width="3.6" height="4.2" fill="#131313"/><rect x="-0.8" y="-2.2" width="1.6" height="1.6" fill="#131313"/><path d="M-2.6 -3.6 L-2 -3 M0 -4 V-3.2 M2.6 -3.6 L2 -3" stroke="#333333" stroke-width="0.7"/></g>
<g transform="translate(8.20 306.80) scale(0.92)" opacity="1"><path d="M-3.4 1.6 L0.6 -2.6 L3 -0.4 L-1 3.6 Z" fill="#131313"/><path d="M1.4 -3.4 L3.6 -1.2" stroke="#8c2038" stroke-width="1.4"/></g>
<g transform="translate(8.20 321.40) scale(0.92)" opacity="1"><path d="M-2.6 -2.6 Q1.6 -2 -0.2 0.2 Q-1.6 2 2.8 2.8" fill="none" stroke="#131313" stroke-width="1.1"/><circle cx="-2.8" cy="-2.8" r="1.1" fill="#131313"/><circle cx="2.8" cy="2.8" r="1.1" fill="#131313"/></g>
<g transform="translate(8.20 336.00) scale(0.92)" opacity="1"><path d="M-2.6 -3.4 H1 L2.6 -1.8 V3.4 H-2.6 Z" fill="none" stroke="#131313" stroke-width="1.2"/><path d="M-1.2 0 H1.2 M-1.2 1.6 H1.2" stroke="#131313" stroke-width="0.7"/></g>
<g transform="translate(8.20 350.60) scale(0.92)" opacity="1"><circle cx="-0.5" cy="-0.5" r="2.6" fill="none" stroke="#131313" stroke-width="1.2"/><path d="M1.4 1.4 L3.6 3.6" stroke="#131313" stroke-width="1.4"/></g>
<g transform="translate(8.20 365.20) scale(0.92)" opacity="1"><rect x="-3" y="-1.8" width="4.4" height="5.4" fill="#7a7979" stroke="#131313" stroke-width="1"/><path d="M-1.4 -1.8 V-3.4 H1.6 L3.2 -1.8 V2.2 H1.4" fill="none" stroke="#131313" stroke-width="1"/></g>
<path d="M24.8 160.4 L26.8 162 L24.8 163.6 Z" fill="#131313"/>
<path d="M477.6 61.6 L479.2 63.6 L480.8 61.6 Z" fill="#131313" transform="translate(-0.6 -1)"/>
<rect x="492.50" y="52.00" width="275.50" height="402.40" fill="#7a7a7a" />
<rect x="496.00" y="84.40" width="268.50" height="316.00" fill="#808080" />
<rect x="492.50" y="84.40" width="4.00" height="131.00" fill="#7e7e7e" />
<rect x="496.00" y="400.20" width="268.50" height="0.50" fill="#707070" />
<rect x="492.50" y="54.00" width="271.90" height="17.20" fill="#767472" />
<rect x="752.60" y="54.60" width="11.80" height="16.00" fill="#777777" />
<rect x="584.50" y="55.00" width="63.00" height="14.00" fill="#787878" />
<rect x="584.50" y="68.80" width="63.00" height="1.80" fill="#1054a6" />
<rect x="492.50" y="71.20" width="271.90" height="1.40" fill="#7a7a7a" />
<rect x="492.50" y="72.60" width="271.90" height="11.80" fill="#747271" />
<rect x="524.50" y="83.20" width="43.80" height="1.60" fill="#1054a6" />
<g transform="translate(510.30 62.30) scale(0.92)" opacity="1"><path d="M-2.8899999999999997 -3.06 H2.8899999999999997 V-1.7 H0.765 V3.23 H-0.765 V-1.7 H-2.8899999999999997 Z" fill="#131313"/></g>
<g transform="translate(538.80 62.30) scale(1)" opacity="1"><path d="M-1.6 -3 Q1.6 -3.4 1 -0.8 Q0.6 1 3.4 0.2" fill="none" stroke="#11881c" stroke-width="2" stroke-linecap="round"/><circle cx="-2" cy="2.4" r="1.7" fill="#080808"/></g>
<g transform="translate(567.80 62.30) scale(0.92)" opacity="1"><circle cx="0.6" cy="-0.4" r="2.8" fill="none" stroke="#131313" stroke-width="1.3"/><circle cx="0.8" cy="-0.4" r="0.9" fill="#0c781e"/><rect x="-3.8" y="1.6" width="2.6" height="2.2" fill="#131313"/></g>
<g transform="translate(592.60 62.20) scale(0.92)" opacity="1"><path d="M-3.6 -3 H1 M-3.6 -3 V3.4 H2.6 V0" fill="none" stroke="#131313" stroke-width="1"/><path d="M3.6 -3.8 L-0.6 1.4 L-1.4 3 L0.4 2.2 L4.4 -3 Z" fill="#131313"/><path d="M-2.6 2 L-1 3.6" stroke="#1d6a9a" stroke-width="0.9"/></g>
<text x="598.30" y="64.20" font-size="5.7" fill="#131313" stroke="#131313" stroke-width="0.22" font-weight="normal" text-anchor="start"  textLength="36.2" lengthAdjust="spacingAndGlyphs">Fill and Stroke</text>
<path d="M636.6 60.4 L640.2 64 M640.2 60.4 L636.6 64" stroke="#202020" stroke-width="0.7"/>
<g transform="translate(664.00 62.20) scale(0.92)" opacity="1"><rect x="-0.6" y="-3.8" width="1.2" height="7.6" fill="#155d21"/><rect x="-2.6" y="-2.6" width="4.6" height="1.8" fill="#131313"/><rect x="-2.6" y="0.2" width="6" height="1.8" fill="#131313"/></g>
<g transform="translate(692.40 62.20) scale(0.92)" opacity="1"><path d="M-2.6 -3.6 H0.8 L2.8 -1.6 V3.6 H-2.6 Z" fill="#7e7e7e" stroke="#131313" stroke-width="1.3" stroke-linejoin="round"/><path d="M1 1.4 H4 M2.6 -0.2 L4.2 1.4 L2.6 3" stroke="#119a23" stroke-width="1" fill="none"/></g>
<g transform="translate(722.00 62.20) scale(0.92)" opacity="1"><rect x="-3.4" y="-3.8" width="5.4" height="1.5" fill="#1569aa"/><rect x="-2.6" y="-1.6" width="5.4" height="1.5" fill="#1569aa"/><rect x="-1.6" y="0.6" width="5" height="1.5" fill="#131313"/><rect x="-1" y="2.8" width="3.4" height="1" fill="#131313"/></g>
<path d="M755.6 60.6 L758.4 63.4 L761.2 60.6" fill="none" stroke="#2a2a2a" stroke-width="0.9"/>
<rect x="501.80" y="74.80" width="6.20" height="6.20" fill="#080808" />
<text x="510.20" y="79.80" font-size="5.5" fill="#131313" stroke="#131313" stroke-width="0.22" font-weight="normal" text-anchor="start" >Fill</text>
<rect x="528" y="75" width="5.8" height="5.8" fill="#808080" stroke="#111111" stroke-width="0.9"/>
<text x="536.30" y="79.80" font-size="5.5" fill="#131313" stroke="#131313" stroke-width="0.22" font-weight="normal" text-anchor="start"  textLength="29.7" lengthAdjust="spacingAndGlyphs">Stroke paint</text>
<g transform="translate(578.80 77.80) scale(0.92)" opacity="1"><path d="M-3.2 2.2 L2.4 -2.2" stroke="#155d9e" stroke-width="1" stroke-dasharray="1.4 0.8"/><path d="M-2.4 -3 H-0.6 M1.4 -3.4 H3.4 V-1.4 M3.4 0.6 V2.2" stroke="#155d9e" stroke-width="0.8" fill="none"/><path d="M-3.4 3.6 H1" stroke="#131313" stroke-width="0.8"/></g>
<text x="584.60" y="79.80" font-size="5.5" fill="#131313" stroke="#131313" stroke-width="0.22" font-weight="normal" text-anchor="start"  textLength="28.3" lengthAdjust="spacingAndGlyphs">Stroke style</text>
<path d="M500.8 91 L504.4 94.6 M504.4 91 L500.8 94.6" stroke="#131313" stroke-width="1.1"/>
<rect x="509.80" y="87.60" width="11.60" height="10.80" fill="#766e69" rx="1.2" stroke="#6b6460" stroke-width="0.5"/>
<rect x="512.20" y="89.40" width="7.00" height="7.00" fill="#0c6eb9" />
<defs><linearGradient id="lg1_d"><stop offset="0" stop-color="#0c6eb9"/><stop offset="1" stop-color="#030a16"/></linearGradient><radialGradient id="rg1_d"><stop offset="0.25" stop-color="#0c6eb9"/><stop offset="0.8" stop-color="#030a16"/></radialGradient></defs>
<rect x="524.50" y="89.40" width="7.00" height="7.00" fill="url(#lg1_d)" />
<rect x="537.40" y="89.40" width="7.00" height="7.00" fill="url(#rg1_d)" />
<rect x="549.80" y="89.40" width="7.00" height="7.00" fill="#050c1c" />
<rect x="549.80" y="89.40" width="3.50" height="3.50" fill="#0c6eb9" />
<rect x="553.30" y="92.90" width="3.50" height="3.50" fill="#0b5496" />
<g transform="translate(566.00 92.90) scale(0.92)" opacity="1"><path d="M-3.6 -1.4 H3.6 M-3.6 1.6 H3.6 M-1.4 -3.6 V3.6 M1.6 -3.6 V3.6" stroke="#080808" stroke-width="1.2"/><rect x="-2.4" y="-2.4" width="1.8" height="1.8" fill="#131313"/><rect x="0.8" y="0.8" width="1.8" height="1.8" fill="#131313"/><rect x="-2.4" y="0.8" width="1.8" height="1.8" fill="#131313"/><rect x="0.8" y="-2.4" width="1.8" height="1.8" fill="#131313"/></g>
<rect x="575.2" y="89.3" width="7.2" height="7.2" fill="#6c6c6c" stroke="#484848" stroke-width="0.7"/>
<rect x="577.00" y="91.10" width="3.60" height="3.60" fill="#0c6eb9" />
<text x="591.40" y="96.20" font-size="9" fill="#0d0d0d" stroke="#0d0d0d" stroke-width="0.22" font-weight="bold" text-anchor="middle" >?</text>
<rect x="738.20" y="86.70" width="11.80" height="11.10" fill="#767676" rx="1.8" stroke="#626262" stroke-width="0.6"/>
<g transform="translate(744.20 92.40) scale(1)" opacity="1"><path d="M-4 -2.2 Q-4 -4.2 -2.3 -3.9 Q-0.7 -3.5 0 -1.8 Q0.7 -3.5 2.3 -3.9 Q4 -4.2 4 -2.2 V-0.6 C4 2.2 2.6 3.9 0 3.9 C-2.6 3.9 -4 2.2 -4 -0.6 Z" fill="#080808"/><path d="M-1.1 -1.5 Q0 0 1.1 -1.5 V0.4 Q1.1 1.8 0 1.8 Q-1.1 1.8 -1.1 0.4 Z" fill="#7c7c7c"/></g>
<g transform="translate(756.70 92.40) scale(1)" opacity="1"><path d="M-4 -2.2 Q-4 -4.2 -2.3 -3.9 Q-0.7 -3.5 0 -1.8 Q0.7 -3.5 2.3 -3.9 Q4 -4.2 4 -2.2 V-0.6 C4 2.2 2.6 3.9 0 3.9 C-2.6 3.9 -4 2.2 -4 -0.6 Z" fill="#080808"/></g>
<text x="497.50" y="112.00" font-size="5.4" fill="#0d0d0d" stroke="#0d0d0d" stroke-width="0.22" font-weight="bold" text-anchor="start"  textLength="23.3" lengthAdjust="spacingAndGlyphs">Flat color</text>
<rect x="717.50" y="103.60" width="43.80" height="13.20" fill="#7a7a7a" rx="1.8" stroke="#6f6f6f" stroke-width="0.6"/>
<circle cx="724" cy="111.8" r="2.2" fill="#08a414"/><circle cx="727.7" cy="111.8" r="2.2" fill="#1028b7"/><circle cx="725.8" cy="108.6" r="2.2" fill="#b71010"/>
<text x="732.90" y="112.00" font-size="5.2" fill="#252525" stroke="#252525" stroke-width="0.22" font-weight="normal" text-anchor="start"  textLength="11.4" lengthAdjust="spacingAndGlyphs">RGB</text>
<path d="M751.3 108.6 H756.9 L754.1 112 Z" fill="#0d0d0d"/>
<text x="499.00" y="129.70" font-size="5.2" fill="#1a1a1a" stroke="#1a1a1a" stroke-width="0.22" font-weight="normal" text-anchor="start" >R</text>
<rect x="506.20" y="120.20" width="220.80" height="15.20" fill="url(#gR_d)" />
<path d="M649.8682352941177 119.8 H653.4682352941176 L651.6682352941176 121.8 Z M649.8682352941177 135.8 H653.4682352941176 L651.6682352941176 133.8 Z" fill="#808080" stroke="#1a1a1a" stroke-width="0.5"/>
<rect x="728.80" y="119.80" width="32.60" height="15.80" fill="#808080" rx="1.5"/>
<text x="732.40" y="129.70" font-size="5.1" fill="#151515" stroke="#151515" stroke-width="0.22" font-weight="normal" text-anchor="start" >168</text>
<path d="M746.4000000000001 127.7 H752.0" stroke="#171717" stroke-width="1.05"/>
<path d="M753.9 127.7 H760.1 M757 124.60000000000001 V130.8" stroke="#171717" stroke-width="1.05"/>
<text x="499.00" y="146.95" font-size="5.2" fill="#1a1a1a" stroke="#1a1a1a" stroke-width="0.22" font-weight="normal" text-anchor="start" >G</text>
<rect x="506.20" y="137.30" width="220.80" height="15.50" fill="url(#gG_d)" />
<path d="M668.9176470588236 136.9 H672.5176470588235 L670.7176470588236 138.9 Z M668.9176470588236 153.20000000000002 H672.5176470588235 L670.7176470588236 151.20000000000002 Z" fill="#808080" stroke="#1a1a1a" stroke-width="0.5"/>
<rect x="728.80" y="136.90" width="32.60" height="16.10" fill="#808080" rx="1.5"/>
<text x="732.40" y="146.95" font-size="5.1" fill="#151515" stroke="#151515" stroke-width="0.22" font-weight="normal" text-anchor="start" >190</text>
<path d="M746.4000000000001 144.95000000000002 H752.0" stroke="#171717" stroke-width="1.05"/>
<path d="M753.9 144.95000000000002 H760.1 M757 141.85000000000002 V148.05" stroke="#171717" stroke-width="1.05"/>
<text x="499.00" y="164.10" font-size="5.2" fill="#1a1a1a" stroke="#1a1a1a" stroke-width="0.22" font-weight="normal" text-anchor="start" >B</text>
<rect x="506.20" y="154.80" width="220.80" height="14.80" fill="url(#gB_d)" />
<path d="M504.4 154.4 H508.0 L506.2 156.4 Z M504.4 170.0 H508.0 L506.2 168.0 Z" fill="#808080" stroke="#1a1a1a" stroke-width="0.5"/>
<rect x="728.80" y="154.40" width="32.60" height="15.40" fill="#808080" rx="1.5"/>
<text x="732.40" y="164.10" font-size="5.1" fill="#151515" stroke="#151515" stroke-width="0.22" font-weight="normal" text-anchor="start" >0</text>
<path d="M753.9 162.1 H760.1 M757 159.0 V165.2" stroke="#171717" stroke-width="1.05"/>
<path d="M746.6 162.2 H751.8" stroke="#6c6c6c" stroke-width="0.8"/>
<text x="499.00" y="181.20" font-size="5.2" fill="#1a1a1a" stroke="#1a1a1a" stroke-width="0.22" font-weight="normal" text-anchor="start" >A</text>
<rect x="506.20" y="171.90" width="220.80" height="14.80" fill="url(#chk_d)" />
<rect x="506.20" y="171.90" width="220.80" height="14.80" fill="url(#gA_d)" />
<path d="M725.2 171.5 H728.8 L727.0 173.5 Z M725.2 187.1 H728.8 L727.0 185.1 Z" fill="#808080" stroke="#1a1a1a" stroke-width="0.5"/>
<rect x="728.80" y="171.50" width="32.60" height="15.40" fill="#808080" rx="1.5"/>
<text x="732.40" y="181.20" font-size="5.1" fill="#151515" stroke="#151515" stroke-width="0.22" font-weight="normal" text-anchor="start" >100</text>
<path d="M746.4000000000001 179.2 H752.0" stroke="#171717" stroke-width="1.05"/>
<path d="M753.9 179.2 H760.1 M757 176.1 V182.29999999999998" stroke="#686868" stroke-width="1.05"/>
<g transform="translate(501.60 390.60) scale(0.92)" opacity="1"><rect x="-2.6" y="-0.2" width="5.2" height="3.4" fill="#646464"/><path d="M-1.4 -0.2 V-2 A1.4 1.4 0 0 1 1.4 -2 V-0.2" fill="none" stroke="#646464" stroke-width="0.8"/></g>
<g transform="translate(511.00 390.60) scale(0.92)" opacity="1"><rect x="-2.6" y="-2.6" width="5.2" height="5.2" fill="#737373"/></g>
<g transform="translate(524.20 390.60) scale(0.92)" opacity="1"><path d="M-3.4 3.4 L-2.6 1.2 L0.6 -2 L2 -0.6 L-1.2 2.6 Z" fill="#131313"/><path d="M1.2 -3.4 L3.4 -1.2" stroke="#1569aa" stroke-width="1.8"/><path d="M-3.2 -1.4 L-2 -0.2" stroke="#1569aa" stroke-width="0.9"/></g>
<text x="711.60" y="391.80" font-size="4.8" fill="#454545" stroke="#454545" stroke-width="0.22" font-weight="normal" text-anchor="start"  textLength="13.6" lengthAdjust="spacingAndGlyphs">RGBA:</text>
<rect x="728.20" y="384.00" width="34.00" height="12.40" fill="#808080" rx="1.5" stroke="#6d6d6d" stroke-width="0.6"/>
<text x="732.90" y="391.90" font-size="5.4" fill="#181818" stroke="#181818" stroke-width="0.22" font-weight="normal" text-anchor="start"  textLength="21.5" lengthAdjust="spacingAndGlyphs">a8be00ff</text>
<text x="683.70" y="411.20" font-size="5.3" fill="#202020" stroke="#202020" stroke-width="0.22" font-weight="normal" text-anchor="start"  textLength="29.1" lengthAdjust="spacingAndGlyphs">Blend mode:</text>
<rect x="715.20" y="403.40" width="47.00" height="12.40" fill="#717171" rx="1.5"/>
<text x="720.00" y="411.20" font-size="5.4" fill="#181818" stroke="#181818" stroke-width="0.22" font-weight="normal" text-anchor="start"  textLength="17.6" lengthAdjust="spacingAndGlyphs">Normal</text>
<path d="M753.4 408 H758.8 L756.1 411.2 Z" fill="#0d0d0d"/>
<rect x="496.20" y="419.60" width="234.20" height="13.60" fill="#6b6b6b" />
<rect x="496.20" y="419.60" width="1.10" height="13.60" fill="#15519e" />
<text x="498.50" y="428.20" font-size="5.4" fill="#181818" stroke="#181818" stroke-width="0.22" font-weight="normal" text-anchor="start"  textLength="19.9" lengthAdjust="spacingAndGlyphs">Blur (%)</text>
<rect x="731.00" y="419.40" width="31.60" height="14.00" fill="#7a7a7a" rx="1.5"/>
<text x="733.80" y="428.34" font-size="5.4" fill="#151515" stroke="#151515" stroke-width="0.22" font-weight="normal" text-anchor="start" >0.0</text>
<path d="M756.1 426.4 H762.3000000000001 M759.2 423.29999999999995 V429.5" stroke="#171717" stroke-width="1.05"/>
<rect x="496.20" y="436.30" width="234.20" height="12.90" fill="#0a5eaa" />
<text x="498.50" y="444.50" font-size="5.4" fill="#7a7a7a" stroke="#7a7a7a" stroke-width="0.22" font-weight="normal" text-anchor="start"  textLength="28.1" lengthAdjust="spacingAndGlyphs">Opacity (%)</text>
<rect x="731.00" y="436.00" width="31.60" height="13.40" fill="#7a7a7a" rx="1.5"/>
<text x="734.50" y="444.64" font-size="5.4" fill="#151515" stroke="#151515" stroke-width="0.22" font-weight="normal" text-anchor="start" >100.0</text>
<path d="M749.8000000000001 442.7 H755.4" stroke="#171717" stroke-width="1.05"/>
<path d="M757.6 442.7 H762 M759.8 440.5 V444.9" stroke="#686868" stroke-width="0.7"/>
<rect x="1.00" y="454.00" width="766.00" height="29.00" fill="#7a7979" />
<rect x="9.35" y="459.80" width="7.74" height="7.40" fill="#000000" />
<rect x="17.04" y="459.80" width="7.74" height="7.40" fill="#0d0d0d" />
<rect x="24.73" y="459.80" width="7.74" height="7.40" fill="#1a1a1a" />
<rect x="32.42" y="459.80" width="7.74" height="7.40" fill="#262626" />
<rect x="40.11" y="459.80" width="7.74" height="7.40" fill="#333333" />
<rect x="47.80" y="459.80" width="7.74" height="7.40" fill="#404040" />
<rect x="55.49" y="459.80" width="7.74" height="7.40" fill="#4c4c4c" />
<rect x="63.18" y="459.80" width="7.74" height="7.40" fill="#5a5a5a" />
<rect x="70.87" y="459.80" width="7.74" height="7.40" fill="#666666" />
<rect x="78.56" y="459.80" width="7.74" height="7.40" fill="#737373" />
<rect x="86.25" y="459.80" width="7.74" height="7.40" fill="#767676" />
<rect x="93.94" y="459.80" width="7.74" height="7.40" fill="#797979" />
<rect x="101.63" y="459.80" width="7.74" height="7.40" fill="#7c7c7c" />
<rect x="109.32" y="459.80" width="7.74" height="7.40" fill="#808080" />
<rect x="117.01" y="459.80" width="7.74" height="7.40" fill="#600000" />
<rect x="124.70" y="459.80" width="7.74" height="7.40" fill="#bf0000" />
<rect x="132.39" y="459.80" width="7.74" height="7.40" fill="#606000" />
<rect x="140.08" y="459.80" width="7.74" height="7.40" fill="#bfbf00" />
<rect x="147.77" y="459.80" width="7.74" height="7.40" fill="#006000" />
<rect x="155.46" y="459.80" width="7.74" height="7.40" fill="#00bf00" />
<rect x="163.15" y="459.80" width="7.74" height="7.40" fill="#006060" />
<rect x="170.84" y="459.80" width="7.74" height="7.40" fill="#00bfbf" />
<rect x="178.53" y="459.80" width="7.74" height="7.40" fill="#000060" />
<rect x="186.22" y="459.80" width="7.74" height="7.40" fill="#0000bf" />
<rect x="193.91" y="459.80" width="7.74" height="7.40" fill="#600060" />
<rect x="201.60" y="459.80" width="7.74" height="7.40" fill="#bf00bf" />
<rect x="209.29" y="459.80" width="7.74" height="7.40" fill="#200000" />
<rect x="216.98" y="459.80" width="7.74" height="7.40" fill="#400000" />
<rect x="224.67" y="459.80" width="7.74" height="7.40" fill="#600000" />
<rect x="232.36" y="459.80" width="7.74" height="7.40" fill="#800000" />
<rect x="240.05" y="459.80" width="7.74" height="7.40" fill="#9f0000" />
<rect x="247.74" y="459.80" width="7.74" height="7.40" fill="#bf0000" />
<rect x="255.43" y="459.80" width="7.74" height="7.40" fill="#b51515" />
<rect x="263.12" y="459.80" width="7.74" height="7.40" fill="#aa2a2a" />
<rect x="270.81" y="459.80" width="7.74" height="7.40" fill="#9f4040" />
<rect x="278.50" y="459.80" width="7.74" height="7.40" fill="#955555" />
<rect x="286.19" y="459.80" width="7.74" height="7.40" fill="#8a6a6a" />
<rect x="293.88" y="459.80" width="7.74" height="7.40" fill="#1b0606" />
<rect x="301.57" y="459.80" width="7.74" height="7.40" fill="#360b0b" />
<rect x="309.26" y="459.80" width="7.74" height="7.40" fill="#521010" />
<rect x="316.95" y="459.80" width="7.74" height="7.40" fill="#6d1616" />
<rect x="324.64" y="459.80" width="7.74" height="7.40" fill="#881c1c" />
<rect x="332.33" y="459.80" width="7.74" height="7.40" fill="#863030" />
<rect x="340.02" y="459.80" width="7.74" height="7.40" fill="#854444" />
<rect x="347.71" y="459.80" width="7.74" height="7.40" fill="#835858" />
<rect x="355.40" y="459.80" width="7.74" height="7.40" fill="#816c6c" />
<rect x="363.09" y="459.80" width="7.74" height="7.40" fill="#140e0e" />
<rect x="370.78" y="459.80" width="7.74" height="7.40" fill="#281c1c" />
<rect x="378.47" y="459.80" width="7.74" height="7.40" fill="#3c2a2a" />
<rect x="386.16" y="459.80" width="7.74" height="7.40" fill="#513838" />
<rect x="393.85" y="459.80" width="7.74" height="7.40" fill="#5c4a4a" />
<rect x="401.54" y="459.80" width="7.74" height="7.40" fill="#685c5c" />
<rect x="409.23" y="459.80" width="7.74" height="7.40" fill="#746e6e" />
<rect x="416.92" y="459.80" width="7.74" height="7.40" fill="#200d00" />
<rect x="424.61" y="459.80" width="7.74" height="7.40" fill="#401a00" />
<rect x="432.30" y="459.80" width="7.74" height="7.40" fill="#602600" />
<rect x="439.99" y="459.80" width="7.74" height="7.40" fill="#803300" />
<rect x="447.68" y="459.80" width="7.74" height="7.40" fill="#9f4000" />
<rect x="455.37" y="459.80" width="7.74" height="7.40" fill="#bf4c00" />
<rect x="463.06" y="459.80" width="7.74" height="7.40" fill="#b55515" />
<rect x="470.75" y="459.80" width="7.74" height="7.40" fill="#aa5e2a" />
<rect x="478.44" y="459.80" width="7.74" height="7.40" fill="#9f6640" />
<rect x="486.13" y="459.80" width="7.74" height="7.40" fill="#956e55" />
<rect x="493.82" y="459.80" width="7.74" height="7.40" fill="#8a776a" />
<rect x="501.51" y="459.80" width="7.74" height="7.40" fill="#1b0e06" />
<rect x="509.20" y="459.80" width="7.74" height="7.40" fill="#361c0b" />
<rect x="516.89" y="459.80" width="7.74" height="7.40" fill="#522b10" />
<rect x="524.58" y="459.80" width="7.74" height="7.40" fill="#6d3816" />
<rect x="532.27" y="459.80" width="7.74" height="7.40" fill="#88471c" />
<rect x="539.96" y="459.80" width="7.74" height="7.40" fill="#865230" />
<rect x="547.65" y="459.80" width="7.74" height="7.40" fill="#855e44" />
<rect x="555.34" y="459.80" width="7.74" height="7.40" fill="#836958" />
<rect x="563.03" y="459.80" width="7.74" height="7.40" fill="#81746c" />
<rect x="570.72" y="459.80" width="7.74" height="7.40" fill="#14100e" />
<rect x="578.41" y="459.80" width="7.74" height="7.40" fill="#28211c" />
<rect x="586.10" y="459.80" width="7.74" height="7.40" fill="#3c312a" />
<rect x="593.79" y="459.80" width="7.74" height="7.40" fill="#514138" />
<rect x="601.48" y="459.80" width="7.74" height="7.40" fill="#5c514a" />
<rect x="609.17" y="459.80" width="7.74" height="7.40" fill="#68615c" />
<rect x="616.86" y="459.80" width="7.74" height="7.40" fill="#74706e" />
<rect x="624.55" y="459.80" width="7.74" height="7.40" fill="#201a00" />
<rect x="632.24" y="459.80" width="7.74" height="7.40" fill="#403300" />
<rect x="639.93" y="459.80" width="7.74" height="7.40" fill="#604c00" />
<rect x="647.62" y="459.80" width="7.74" height="7.40" fill="#806600" />
<rect x="655.31" y="459.80" width="7.74" height="7.40" fill="#9f8000" />
<rect x="663.00" y="459.80" width="7.74" height="7.40" fill="#bf9900" />
<rect x="670.69" y="459.80" width="7.74" height="7.40" fill="#b59415" />
<rect x="678.38" y="459.80" width="7.74" height="7.40" fill="#aa902a" />
<rect x="686.07" y="459.80" width="7.74" height="7.40" fill="#9f8c40" />
<rect x="693.76" y="459.80" width="7.74" height="7.40" fill="#958855" />
<rect x="701.45" y="459.80" width="7.74" height="7.40" fill="#8a836a" />
<rect x="709.14" y="459.80" width="7.74" height="7.40" fill="#1b1706" />
<rect x="716.83" y="459.80" width="7.74" height="7.40" fill="#362e0b" />
<rect x="1.60" y="459.80" width="7.60" height="7.40" fill="#7a7a7a" />
<path d="M1.8 460.0 L9 467.0 M9 460.0 L1.8 467.0" stroke="#88101c" stroke-width="0.9"/>
<path d="M734 463.8 L737 460.8 L740 463.8" fill="none" stroke="#131313" stroke-width="1.4"/>
<path d="M748.4 460.6 L751.4 463.6 L754.4 460.6" fill="none" stroke="#131313" stroke-width="1.4"/>
<path d="M760.2 459.8 H766.4 M760.2 462.2 H766.4 M760.2 464.6 H766.4" stroke="#131313" stroke-width="1.2"/>
<text x="10.80" y="473.60" font-size="5.3" fill="#1c1c1c" stroke="#1c1c1c" stroke-width="0.22" font-weight="normal" text-anchor="start" >Fill:</text>
<text x="31.60" y="473.60" font-size="5.3" fill="#1c1c1c" stroke="#1c1c1c" stroke-width="0.22" font-weight="normal" text-anchor="start" >None</text>
<text x="1.80" y="481.40" font-size="5.3" fill="#1c1c1c" stroke="#1c1c1c" stroke-width="0.22" font-weight="normal" text-anchor="start" >Stroke:</text>
<rect x="26.30" y="475.30" width="23.00" height="8.00" fill="#7e8e00" />
<text x="54.20" y="481.40" font-size="5.3" fill="#1c1c1c" stroke="#1c1c1c" stroke-width="0.22" font-weight="normal" text-anchor="start" >4.28</text>
<text x="69.00" y="477.20" font-size="5.3" fill="#202020" stroke="#202020" stroke-width="0.22" font-weight="normal" text-anchor="start" >O:</text>
<rect x="75.00" y="469.80" width="31.60" height="13.40" fill="#7a7a7a" rx="1.5"/>
<text x="78.40" y="477.20" font-size="5.3" fill="#151515" stroke="#151515" stroke-width="0.22" font-weight="normal" text-anchor="start" >100</text>
<path d="M93.0 476.5 H98.6" stroke="#171717" stroke-width="1.05"/>
<path d="M101.8 476.5 H106 M103.9 474.4 V478.6" stroke="#6a6a6a" stroke-width="0.7"/>
<rect x="119.20" y="472.00" width="0.90" height="7.00" fill="#1d468e" />
<text x="123.30" y="477.20" font-size="5.3" fill="#202020" stroke="#202020" stroke-width="0.22" font-weight="normal" text-anchor="start" >Layer 1</text>
<g transform="translate(155.00 475.60) scale(0.92)" opacity="1"><ellipse rx="2.9" ry="2.1" fill="none" stroke="#131313" stroke-width="1.3"/><path d="M0 -3.4 V3.4" stroke="#131313" stroke-width="1.1"/></g>
<g transform="translate(170.60 475.60) scale(0.92)" opacity="1"><rect x="-2.6" y="-0.2" width="4.6" height="3.4" fill="#131313"/><path d="M0.2 -0.2 V-1.8 A1.3 1.3 0 0 1 2.8 -1.8 V-1.2" fill="none" stroke="#131313" stroke-width="0.8"/></g>
<text x="182.7" y="477.1" font-size="5.1" fill="#1a1a1a" textLength="168" lengthAdjust="spacingAndGlyphs"><tspan font-weight="bold">Ctrl:</tspan> Select inside groups, Move one axis only. <tspan font-weight="bold">Shift:</tspan> Add to selection</text>
<text x="629.00" y="472.20" font-size="5.3" fill="#1c1c1c" stroke="#1c1c1c" stroke-width="0.22" font-weight="normal" text-anchor="start" >X:</text>
<text x="655.00" y="472.20" font-size="5.3" fill="#1c1c1c" stroke="#1c1c1c" stroke-width="0.22" font-weight="normal" text-anchor="end" >306.21</text>
<text x="629.00" y="479.20" font-size="5.3" fill="#1c1c1c" stroke="#1c1c1c" stroke-width="0.22" font-weight="normal" text-anchor="start" >Y:</text>
<text x="655.00" y="479.20" font-size="5.3" fill="#1c1c1c" stroke="#1c1c1c" stroke-width="0.22" font-weight="normal" text-anchor="end" >45.68</text>
<text x="660.40" y="477.60" font-size="5.3" fill="#1c1c1c" stroke="#1c1c1c" stroke-width="0.22" font-weight="normal" text-anchor="start" >Z:</text>
<rect x="666.00" y="469.80" width="42.00" height="13.40" fill="#797979" rx="1.5"/>
<text x="669.60" y="477.60" font-size="5.3" fill="#151515" stroke="#151515" stroke-width="0.22" font-weight="normal" text-anchor="start" >55%</text>
<path d="M688.4000000000001 476.5 H694.0" stroke="#171717" stroke-width="1.05"/>
<path d="M697.9 476.5 H704.1 M701 473.4 V479.6" stroke="#171717" stroke-width="1.05"/>
<text x="711.60" y="477.60" font-size="5.3" fill="#1c1c1c" stroke="#1c1c1c" stroke-width="0.22" font-weight="normal" text-anchor="start" >R:</text>
<rect x="719.00" y="469.80" width="45.00" height="13.40" fill="#797979" rx="1.5"/>
<text x="723.40" y="477.60" font-size="5.3" fill="#151515" stroke="#151515" stroke-width="0.22" font-weight="normal" text-anchor="start" >0.00°</text>
<path d="M744.6 476.5 H750.1999999999999" stroke="#171717" stroke-width="1.05"/>
<path d="M753.3 476.5 H759.5 M756.4 473.4 V479.6" stroke="#171717" stroke-width="1.05"/>
</g>
<clipPath id="hl"><rect x="492.5" y="54.3" width="275.5" height="160.9"/><rect x="227" y="189.9" width="131.8" height="132.5"/></clipPath>
<g clip-path="url(#hl)">
<defs>
<linearGradient id="desk" x1="0" x2="1" y1="0" y2="0"><stop offset="0" stop-color="#8a1842"/><stop offset="0.22" stop-color="#7a2050"/><stop offset="0.4" stop-color="#2a4a80"/><stop offset="0.7" stop-color="#3a6a90"/><stop offset="1" stop-color="#5a7a90"/></linearGradient>
<linearGradient id="gR" x1="0" x2="1"><stop offset="0" stop-color="#00c800"/><stop offset="0.33" stop-color="#08c400"/><stop offset="0.5" stop-color="#5cc000"/><stop offset="0.66" stop-color="#a8be00"/><stop offset="0.85" stop-color="#e6bc00"/><stop offset="1" stop-color="#ffbc08"/></linearGradient>
<linearGradient id="gG" x1="0" x2="1"><stop offset="0" stop-color="#c01000"/><stop offset="0.2" stop-color="#c02000"/><stop offset="0.45" stop-color="#b86000"/><stop offset="0.62" stop-color="#b09800"/><stop offset="0.745" stop-color="#a8be00"/><stop offset="0.9" stop-color="#98f000"/><stop offset="1" stop-color="#8cff08"/></linearGradient>
<linearGradient id="gB" x1="0" x2="1"><stop offset="0" stop-color="#a8be00"/><stop offset="0.25" stop-color="#a8c020"/><stop offset="0.5" stop-color="#a8c070"/><stop offset="0.75" stop-color="#a8c0c0"/><stop offset="1" stop-color="#a8beff"/></linearGradient>
<linearGradient id="gA" x1="0" x2="1"><stop offset="0" stop-color="#a8be00" stop-opacity="0"/><stop offset="1" stop-color="#a8be00" stop-opacity="1"/></linearGradient>
<pattern id="chk" x="506.2" y="171.9" width="6.6" height="6.6" patternUnits="userSpaceOnUse"><rect width="6.6" height="6.6" fill="#a8a8a8"/><rect width="3.3" height="3.3" fill="#585858"/><rect x="3.3" y="3.3" width="3.3" height="3.3" fill="#585858"/></pattern>
</defs>
<rect x="26.80" y="63.70" width="460.20" height="390.70" fill="#d1d1d1" />
<rect x="193.50" y="121.50" width="197.10" height="278.20" fill="#bcbcbc" />
<rect x="192.00" y="120.00" width="197.10" height="278.20" fill="#ffffff" />
<g transform="scale(1.33 1)"><path d="M203.91 213.1 H246.09 V274 C246.09 287 239.10 297.5 218.05 299.3 C206.77 300 196.99 299.8 188.12 299.6 V289.4 C196.99 291 207.52 291.6 218.05 289.8 C225.56 288 229.85 283 229.85 272 V222.2 H203.91 Z" fill="none" stroke="#a6c200" stroke-width="3.9" stroke-linejoin="miter"/></g>
<path d="M303.4 224 V272 C303.4 279 301 283 297 286" fill="none" stroke="#e8200a" stroke-width="0.9"/>
<path d="M325.2 215 V274 C325.2 282 322 287 317 290.5" fill="none" stroke="#e8200a" stroke-width="0.9"/>
<path d="M329.9 212 V276" fill="none" stroke="#e03010" stroke-width="0.6" stroke-dasharray="1 1"/>
<path d="M247.6 288 V301" fill="none" stroke="#e03010" stroke-width="0.6"/>
<path d="M268 211.1 H329.9" fill="none" stroke="#3a4a10" stroke-width="0.7" stroke-dasharray="1.2 1.6"/>
<rect x="247.7" y="210.9" width="82.2" height="91.5" fill="none" stroke="#7070e8" stroke-width="0.6" stroke-dasharray="1.2 1.6"/>
<g transform="translate(245 207.8) rotate(45)"><path d="M-3.2 0 L-1.2000000000000002 -1.6 V-0.7 H1.2000000000000002 V-1.6 L3.2 0 L1.2000000000000002 1.6 V0.7 H-1.2000000000000002 V1.6 Z" fill="#111"/></g>
<g transform="translate(288.8 207.2) rotate(90)"><path d="M-2.7 0 L-0.7000000000000002 -1.6 V-0.7 H0.7000000000000002 V-1.6 L2.7 0 L0.7000000000000002 1.6 V0.7 H-0.7000000000000002 V1.6 Z" fill="#111"/></g>
<g transform="translate(332.3 207.8) rotate(-45)"><path d="M-3.2 0 L-1.2000000000000002 -1.6 V-0.7 H1.2000000000000002 V-1.6 L3.2 0 L1.2000000000000002 1.6 V0.7 H-1.2000000000000002 V1.6 Z" fill="#111"/></g>
<g transform="translate(243.8 256.9) rotate(0)"><path d="M-2.7 0 L-0.7000000000000002 -1.6 V-0.7 H0.7000000000000002 V-1.6 L2.7 0 L0.7000000000000002 1.6 V0.7 H-0.7000000000000002 V1.6 Z" fill="#111"/></g>
<g transform="translate(333.2 256.9) rotate(0)"><path d="M-2.7 0 L-0.7000000000000002 -1.6 V-0.7 H0.7000000000000002 V-1.6 L2.7 0 L0.7000000000000002 1.6 V0.7 H-0.7000000000000002 V1.6 Z" fill="#111"/></g>
<g transform="translate(244.7 305.9) rotate(-45)"><path d="M-3.2 0 L-1.2000000000000002 -1.6 V-0.7 H1.2000000000000002 V-1.6 L3.2 0 L1.2000000000000002 1.6 V0.7 H-1.2000000000000002 V1.6 Z" fill="#111"/></g>
<g transform="translate(288.8 306.6) rotate(90)"><path d="M-2.7 0 L-0.7000000000000002 -1.6 V-0.7 H0.7000000000000002 V-1.6 L2.7 0 L0.7000000000000002 1.6 V0.7 H-0.7000000000000002 V1.6 Z" fill="#111"/></g>
<g transform="translate(332.4 305.9) rotate(45)"><path d="M-3.2 0 L-1.2000000000000002 -1.6 V-0.7 H1.2000000000000002 V-1.6 L3.2 0 L1.2000000000000002 1.6 V0.7 H-1.2000000000000002 V1.6 Z" fill="#111"/></g>
<rect x="107.50" y="446.80" width="284.50" height="3.20" fill="#8a8a8a" rx="1.6"/>
<rect x="482.60" y="136.00" width="3.30" height="203.00" fill="#8e8e8e" rx="1.6"/>
<path d="M482 449 L484.2 444.6 L486.4 449 Z" fill="#333"/><circle cx="482.6" cy="449.6" r="1.5" fill="#18b060"/><circle cx="485.8" cy="449.6" r="1.5" fill="#e03060"/>
<rect x="487.00" y="52.00" width="6.00" height="402.40" fill="#f0f0f0" />
<rect x="490.40" y="250.00" width="1.20" height="5.80" fill="#505050" />
<rect x="492.50" y="52.00" width="275.50" height="402.40" fill="#f4f4f4" />
<rect x="496.00" y="84.40" width="268.50" height="316.00" fill="#ffffff" />
<rect x="492.50" y="84.40" width="4.00" height="131.00" fill="#fbfbfb" />
<rect x="496.00" y="400.20" width="268.50" height="0.50" fill="#e0e0e0" />
<rect x="492.50" y="54.00" width="271.90" height="17.20" fill="#e9e7e5" />
<rect x="752.60" y="54.60" width="11.80" height="16.00" fill="#eeeeee" />
<rect x="584.50" y="55.00" width="63.00" height="14.00" fill="#f1f1f1" />
<rect x="584.50" y="68.80" width="63.00" height="1.80" fill="#1f7ae8" />
<rect x="492.50" y="71.20" width="271.90" height="1.40" fill="#f4f4f4" />
<rect x="492.50" y="72.60" width="271.90" height="11.80" fill="#e6e4e2" />
<rect x="524.50" y="83.20" width="43.80" height="1.60" fill="#1f7ae8" />
<g transform="translate(510.30 62.30) scale(0.92)" opacity="1"><path d="M-2.8899999999999997 -3.06 H2.8899999999999997 V-1.7 H0.765 V3.23 H-0.765 V-1.7 H-2.8899999999999997 Z" fill="#262626"/></g>
<g transform="translate(538.80 62.30) scale(1)" opacity="1"><path d="M-1.6 -3 Q1.6 -3.4 1 -0.8 Q0.6 1 3.4 0.2" fill="none" stroke="#22c030" stroke-width="2" stroke-linecap="round"/><circle cx="-2" cy="2.4" r="1.7" fill="#111"/></g>
<g transform="translate(567.80 62.30) scale(0.92)" opacity="1"><circle cx="0.6" cy="-0.4" r="2.8" fill="none" stroke="#262626" stroke-width="1.3"/><circle cx="0.8" cy="-0.4" r="0.9" fill="#18a830"/><rect x="-3.8" y="1.6" width="2.6" height="2.2" fill="#262626"/></g>
<g transform="translate(592.60 62.20) scale(0.92)" opacity="1"><path d="M-3.6 -3 H1 M-3.6 -3 V3.4 H2.6 V0" fill="none" stroke="#262626" stroke-width="1"/><path d="M3.6 -3.8 L-0.6 1.4 L-1.4 3 L0.4 2.2 L4.4 -3 Z" fill="#262626"/><path d="M-2.6 2 L-1 3.6" stroke="#3aa0e0" stroke-width="0.9"/></g>
<text x="598.30" y="64.20" font-size="5.7" fill="#262626" stroke="#262626" stroke-width="0.22" font-weight="normal" text-anchor="start"  textLength="36.2" lengthAdjust="spacingAndGlyphs">Fill and Stroke</text>
<path d="M636.6 60.4 L640.2 64 M640.2 60.4 L636.6 64" stroke="#404040" stroke-width="0.7"/>
<g transform="translate(664.00 62.20) scale(0.92)" opacity="1"><rect x="-0.6" y="-3.8" width="1.2" height="7.6" fill="#2a8a3a"/><rect x="-2.6" y="-2.6" width="4.6" height="1.8" fill="#262626"/><rect x="-2.6" y="0.2" width="6" height="1.8" fill="#262626"/></g>
<g transform="translate(692.40 62.20) scale(0.92)" opacity="1"><path d="M-2.6 -3.6 H0.8 L2.8 -1.6 V3.6 H-2.6 Z" fill="#fbfbfb" stroke="#262626" stroke-width="1.3" stroke-linejoin="round"/><path d="M1 1.4 H4 M2.6 -0.2 L4.2 1.4 L2.6 3" stroke="#22d83a" stroke-width="1" fill="none"/></g>
<g transform="translate(722.00 62.20) scale(0.92)" opacity="1"><rect x="-3.4" y="-3.8" width="5.4" height="1.5" fill="#2a9af0"/><rect x="-2.6" y="-1.6" width="5.4" height="1.5" fill="#2a9af0"/><rect x="-1.6" y="0.6" width="5" height="1.5" fill="#262626"/><rect x="-1" y="2.8" width="3.4" height="1" fill="#262626"/></g>
<path d="M755.6 60.6 L758.4 63.4 L761.2 60.6" fill="none" stroke="#555" stroke-width="0.9"/>
<rect x="501.80" y="74.80" width="6.20" height="6.20" fill="#111" />
<text x="510.20" y="79.80" font-size="5.5" fill="#262626" stroke="#262626" stroke-width="0.22" font-weight="normal" text-anchor="start" >Fill</text>
<rect x="528" y="75" width="5.8" height="5.8" fill="#fff" stroke="#222" stroke-width="0.9"/>
<text x="536.30" y="79.80" font-size="5.5" fill="#262626" stroke="#262626" stroke-width="0.22" font-weight="normal" text-anchor="start"  textLength="29.7" lengthAdjust="spacingAndGlyphs">Stroke paint</text>
<g transform="translate(578.80 77.80) scale(0.92)" opacity="1"><path d="M-3.2 2.2 L2.4 -2.2" stroke="#2a8ae0" stroke-width="1" stroke-dasharray="1.4 0.8"/><path d="M-2.4 -3 H-0.6 M1.4 -3.4 H3.4 V-1.4 M3.4 0.6 V2.2" stroke="#2a8ae0" stroke-width="0.8" fill="none"/><path d="M-3.4 3.6 H1" stroke="#262626" stroke-width="0.8"/></g>
<text x="584.60" y="79.80" font-size="5.5" fill="#262626" stroke="#262626" stroke-width="0.22" font-weight="normal" text-anchor="start"  textLength="28.3" lengthAdjust="spacingAndGlyphs">Stroke style</text>
<path d="M500.8 91 L504.4 94.6 M504.4 91 L500.8 94.6" stroke="#262626" stroke-width="1.1"/>
<rect x="509.80" y="87.60" width="11.60" height="10.80" fill="#e3d9d2" rx="1.2" stroke="#cfc6c0" stroke-width="0.5"/>
<rect x="512.20" y="89.40" width="7.00" height="7.00" fill="#189aff" />
<defs><linearGradient id="lg1"><stop offset="0" stop-color="#189aff"/><stop offset="1" stop-color="#061020"/></linearGradient><radialGradient id="rg1"><stop offset="0.25" stop-color="#189aff"/><stop offset="0.8" stop-color="#061020"/></radialGradient></defs>
<rect x="524.50" y="89.40" width="7.00" height="7.00" fill="url(#lg1)" />
<rect x="537.40" y="89.40" width="7.00" height="7.00" fill="url(#rg1)" />
<rect x="549.80" y="89.40" width="7.00" height="7.00" fill="#0a1428" />
<rect x="549.80" y="89.40" width="3.50" height="3.50" fill="#189aff" />
<rect x="553.30" y="92.90" width="3.50" height="3.50" fill="#1678d0" />
<g transform="translate(566.00 92.90) scale(0.92)" opacity="1"><path d="M-3.6 -1.4 H3.6 M-3.6 1.6 H3.6 M-1.4 -3.6 V3.6 M1.6 -3.6 V3.6" stroke="#111" stroke-width="1.2"/><rect x="-2.4" y="-2.4" width="1.8" height="1.8" fill="#262626"/><rect x="0.8" y="0.8" width="1.8" height="1.8" fill="#262626"/><rect x="-2.4" y="0.8" width="1.8" height="1.8" fill="#262626"/><rect x="0.8" y="-2.4" width="1.8" height="1.8" fill="#262626"/></g>
<rect x="575.2" y="89.3" width="7.2" height="7.2" fill="#d8d8d8" stroke="#909090" stroke-width="0.7"/>
<rect x="577.00" y="91.10" width="3.60" height="3.60" fill="#189aff" />
<text x="591.40" y="96.20" font-size="9" fill="#1a1a1a" stroke="#1a1a1a" stroke-width="0.22" font-weight="bold" text-anchor="middle" >?</text>
<rect x="738.20" y="86.70" width="11.80" height="11.10" fill="#ececec" rx="1.8" stroke="#c4c4c4" stroke-width="0.6"/>
<g transform="translate(744.20 92.40) scale(1)" opacity="1"><path d="M-4 -2.2 Q-4 -4.2 -2.3 -3.9 Q-0.7 -3.5 0 -1.8 Q0.7 -3.5 2.3 -3.9 Q4 -4.2 4 -2.2 V-0.6 C4 2.2 2.6 3.9 0 3.9 C-2.6 3.9 -4 2.2 -4 -0.6 Z" fill="#111"/><path d="M-1.1 -1.5 Q0 0 1.1 -1.5 V0.4 Q1.1 1.8 0 1.8 Q-1.1 1.8 -1.1 0.4 Z" fill="#f8f8f8"/></g>
<g transform="translate(756.70 92.40) scale(1)" opacity="1"><path d="M-4 -2.2 Q-4 -4.2 -2.3 -3.9 Q-0.7 -3.5 0 -1.8 Q0.7 -3.5 2.3 -3.9 Q4 -4.2 4 -2.2 V-0.6 C4 2.2 2.6 3.9 0 3.9 C-2.6 3.9 -4 2.2 -4 -0.6 Z" fill="#111"/></g>
<text x="497.50" y="112.00" font-size="5.4" fill="#1a1a1a" stroke="#1a1a1a" stroke-width="0.22" font-weight="bold" text-anchor="start"  textLength="23.3" lengthAdjust="spacingAndGlyphs">Flat color</text>
<rect x="717.50" y="103.60" width="43.80" height="13.20" fill="#f5f5f5" rx="1.8" stroke="#dedede" stroke-width="0.6"/>
<circle cx="724" cy="111.8" r="2.2" fill="#10e020"/><circle cx="727.7" cy="111.8" r="2.2" fill="#2040ff"/><circle cx="725.8" cy="108.6" r="2.2" fill="#ff2020"/>
<text x="732.90" y="112.00" font-size="5.2" fill="#4a4a4a" stroke="#4a4a4a" stroke-width="0.22" font-weight="normal" text-anchor="start"  textLength="11.4" lengthAdjust="spacingAndGlyphs">RGB</text>
<path d="M751.3 108.6 H756.9 L754.1 112 Z" fill="#1a1a1a"/>
<text x="499.00" y="129.70" font-size="5.2" fill="#333" stroke="#333" stroke-width="0.22" font-weight="normal" text-anchor="start" >R</text>
<rect x="506.20" y="120.20" width="220.80" height="15.20" fill="url(#gR)" />
<path d="M649.8682352941177 119.8 H653.4682352941176 L651.6682352941176 121.8 Z M649.8682352941177 135.8 H653.4682352941176 L651.6682352941176 133.8 Z" fill="#fff" stroke="#333" stroke-width="0.5"/>
<rect x="728.80" y="119.80" width="32.60" height="15.80" fill="#ffffff" rx="1.5"/>
<text x="732.40" y="129.70" font-size="5.1" fill="#2a2a2a" stroke="#2a2a2a" stroke-width="0.22" font-weight="normal" text-anchor="start" >168</text>
<path d="M746.4000000000001 127.7 H752.0" stroke="#2e2e2e" stroke-width="1.05"/>
<path d="M753.9 127.7 H760.1 M757 124.60000000000001 V130.8" stroke="#2e2e2e" stroke-width="1.05"/>
<text x="499.00" y="146.95" font-size="5.2" fill="#333" stroke="#333" stroke-width="0.22" font-weight="normal" text-anchor="start" >G</text>
<rect x="506.20" y="137.30" width="220.80" height="15.50" fill="url(#gG)" />
<path d="M668.9176470588236 136.9 H672.5176470588235 L670.7176470588236 138.9 Z M668.9176470588236 153.20000000000002 H672.5176470588235 L670.7176470588236 151.20000000000002 Z" fill="#fff" stroke="#333" stroke-width="0.5"/>
<rect x="728.80" y="136.90" width="32.60" height="16.10" fill="#ffffff" rx="1.5"/>
<text x="732.40" y="146.95" font-size="5.1" fill="#2a2a2a" stroke="#2a2a2a" stroke-width="0.22" font-weight="normal" text-anchor="start" >190</text>
<path d="M746.4000000000001 144.95000000000002 H752.0" stroke="#2e2e2e" stroke-width="1.05"/>
<path d="M753.9 144.95000000000002 H760.1 M757 141.85000000000002 V148.05" stroke="#2e2e2e" stroke-width="1.05"/>
<text x="499.00" y="164.10" font-size="5.2" fill="#333" stroke="#333" stroke-width="0.22" font-weight="normal" text-anchor="start" >B</text>
<rect x="506.20" y="154.80" width="220.80" height="14.80" fill="url(#gB)" />
<path d="M504.4 154.4 H508.0 L506.2 156.4 Z M504.4 170.0 H508.0 L506.2 168.0 Z" fill="#fff" stroke="#333" stroke-width="0.5"/>
<rect x="728.80" y="154.40" width="32.60" height="15.40" fill="#ffffff" rx="1.5"/>
<text x="732.40" y="164.10" font-size="5.1" fill="#2a2a2a" stroke="#2a2a2a" stroke-width="0.22" font-weight="normal" text-anchor="start" >0</text>
<path d="M753.9 162.1 H760.1 M757 159.0 V165.2" stroke="#2e2e2e" stroke-width="1.05"/>
<path d="M746.6 162.2 H751.8" stroke="#d8d8d8" stroke-width="0.8"/>
<text x="499.00" y="181.20" font-size="5.2" fill="#333" stroke="#333" stroke-width="0.22" font-weight="normal" text-anchor="start" >A</text>
<rect x="506.20" y="171.90" width="220.80" height="14.80" fill="url(#chk)" />
<rect x="506.20" y="171.90" width="220.80" height="14.80" fill="url(#gA)" />
<path d="M725.2 171.5 H728.8 L727.0 173.5 Z M725.2 187.1 H728.8 L727.0 185.1 Z" fill="#fff" stroke="#333" stroke-width="0.5"/>
<rect x="728.80" y="171.50" width="32.60" height="15.40" fill="#ffffff" rx="1.5"/>
<text x="732.40" y="181.20" font-size="5.1" fill="#2a2a2a" stroke="#2a2a2a" stroke-width="0.22" font-weight="normal" text-anchor="start" >100</text>
<path d="M746.4000000000001 179.2 H752.0" stroke="#2e2e2e" stroke-width="1.05"/>
<path d="M753.9 179.2 H760.1 M757 176.1 V182.29999999999998" stroke="#d0d0d0" stroke-width="1.05"/>
<g transform="translate(501.60 390.60) scale(0.92)" opacity="1"><rect x="-2.6" y="-0.2" width="5.2" height="3.4" fill="#c8c8c8"/><path d="M-1.4 -0.2 V-2 A1.4 1.4 0 0 1 1.4 -2 V-0.2" fill="none" stroke="#c8c8c8" stroke-width="0.8"/></g>
<g transform="translate(511.00 390.60) scale(0.92)" opacity="1"><rect x="-2.6" y="-2.6" width="5.2" height="5.2" fill="#e6e6e6"/></g>
<g transform="translate(524.20 390.60) scale(0.92)" opacity="1"><path d="M-3.4 3.4 L-2.6 1.2 L0.6 -2 L2 -0.6 L-1.2 2.6 Z" fill="#262626"/><path d="M1.2 -3.4 L3.4 -1.2" stroke="#2a9af0" stroke-width="1.8"/><path d="M-3.2 -1.4 L-2 -0.2" stroke="#2a9af0" stroke-width="0.9"/></g>
<text x="711.60" y="391.80" font-size="4.8" fill="#8a8a8a" stroke="#8a8a8a" stroke-width="0.22" font-weight="normal" text-anchor="start"  textLength="13.6" lengthAdjust="spacingAndGlyphs">RGBA:</text>
<rect x="728.20" y="384.00" width="34.00" height="12.40" fill="#ffffff" rx="1.5" stroke="#dadada" stroke-width="0.6"/>
<text x="732.90" y="391.90" font-size="5.4" fill="#303030" stroke="#303030" stroke-width="0.22" font-weight="normal" text-anchor="start"  textLength="21.5" lengthAdjust="spacingAndGlyphs">a8be00ff</text>
<text x="683.70" y="411.20" font-size="5.3" fill="#404040" stroke="#404040" stroke-width="0.22" font-weight="normal" text-anchor="start"  textLength="29.1" lengthAdjust="spacingAndGlyphs">Blend mode:</text>
<rect x="715.20" y="403.40" width="47.00" height="12.40" fill="#e2e2e2" rx="1.5"/>
<text x="720.00" y="411.20" font-size="5.4" fill="#303030" stroke="#303030" stroke-width="0.22" font-weight="normal" text-anchor="start"  textLength="17.6" lengthAdjust="spacingAndGlyphs">Normal</text>
<path d="M753.4 408 H758.8 L756.1 411.2 Z" fill="#1a1a1a"/>
<rect x="496.20" y="419.60" width="234.20" height="13.60" fill="#d6d6d6" />
<rect x="496.20" y="419.60" width="1.10" height="13.60" fill="#2a7ae0" />
<text x="498.50" y="428.20" font-size="5.4" fill="#303030" stroke="#303030" stroke-width="0.22" font-weight="normal" text-anchor="start"  textLength="19.9" lengthAdjust="spacingAndGlyphs">Blur (%)</text>
<rect x="731.00" y="419.40" width="31.60" height="14.00" fill="#f4f4f4" rx="1.5"/>
<text x="733.80" y="428.34" font-size="5.4" fill="#2a2a2a" stroke="#2a2a2a" stroke-width="0.22" font-weight="normal" text-anchor="start" >0.0</text>
<path d="M756.1 426.4 H762.3000000000001 M759.2 423.29999999999995 V429.5" stroke="#2e2e2e" stroke-width="1.05"/>
<rect x="496.20" y="436.30" width="234.20" height="12.90" fill="#1484e9" />
<text x="498.50" y="444.50" font-size="5.4" fill="#f4f4f4" stroke="#f4f4f4" stroke-width="0.22" font-weight="normal" text-anchor="start"  textLength="28.1" lengthAdjust="spacingAndGlyphs">Opacity (%)</text>
<rect x="731.00" y="436.00" width="31.60" height="13.40" fill="#f4f4f4" rx="1.5"/>
<text x="734.50" y="444.64" font-size="5.4" fill="#2a2a2a" stroke="#2a2a2a" stroke-width="0.22" font-weight="normal" text-anchor="start" >100.0</text>
<path d="M749.8000000000001 442.7 H755.4" stroke="#2e2e2e" stroke-width="1.05"/>
<path d="M757.6 442.7 H762 M759.8 440.5 V444.9" stroke="#d0d0d0" stroke-width="0.7"/>
</g>
</svg>
</body></html>
